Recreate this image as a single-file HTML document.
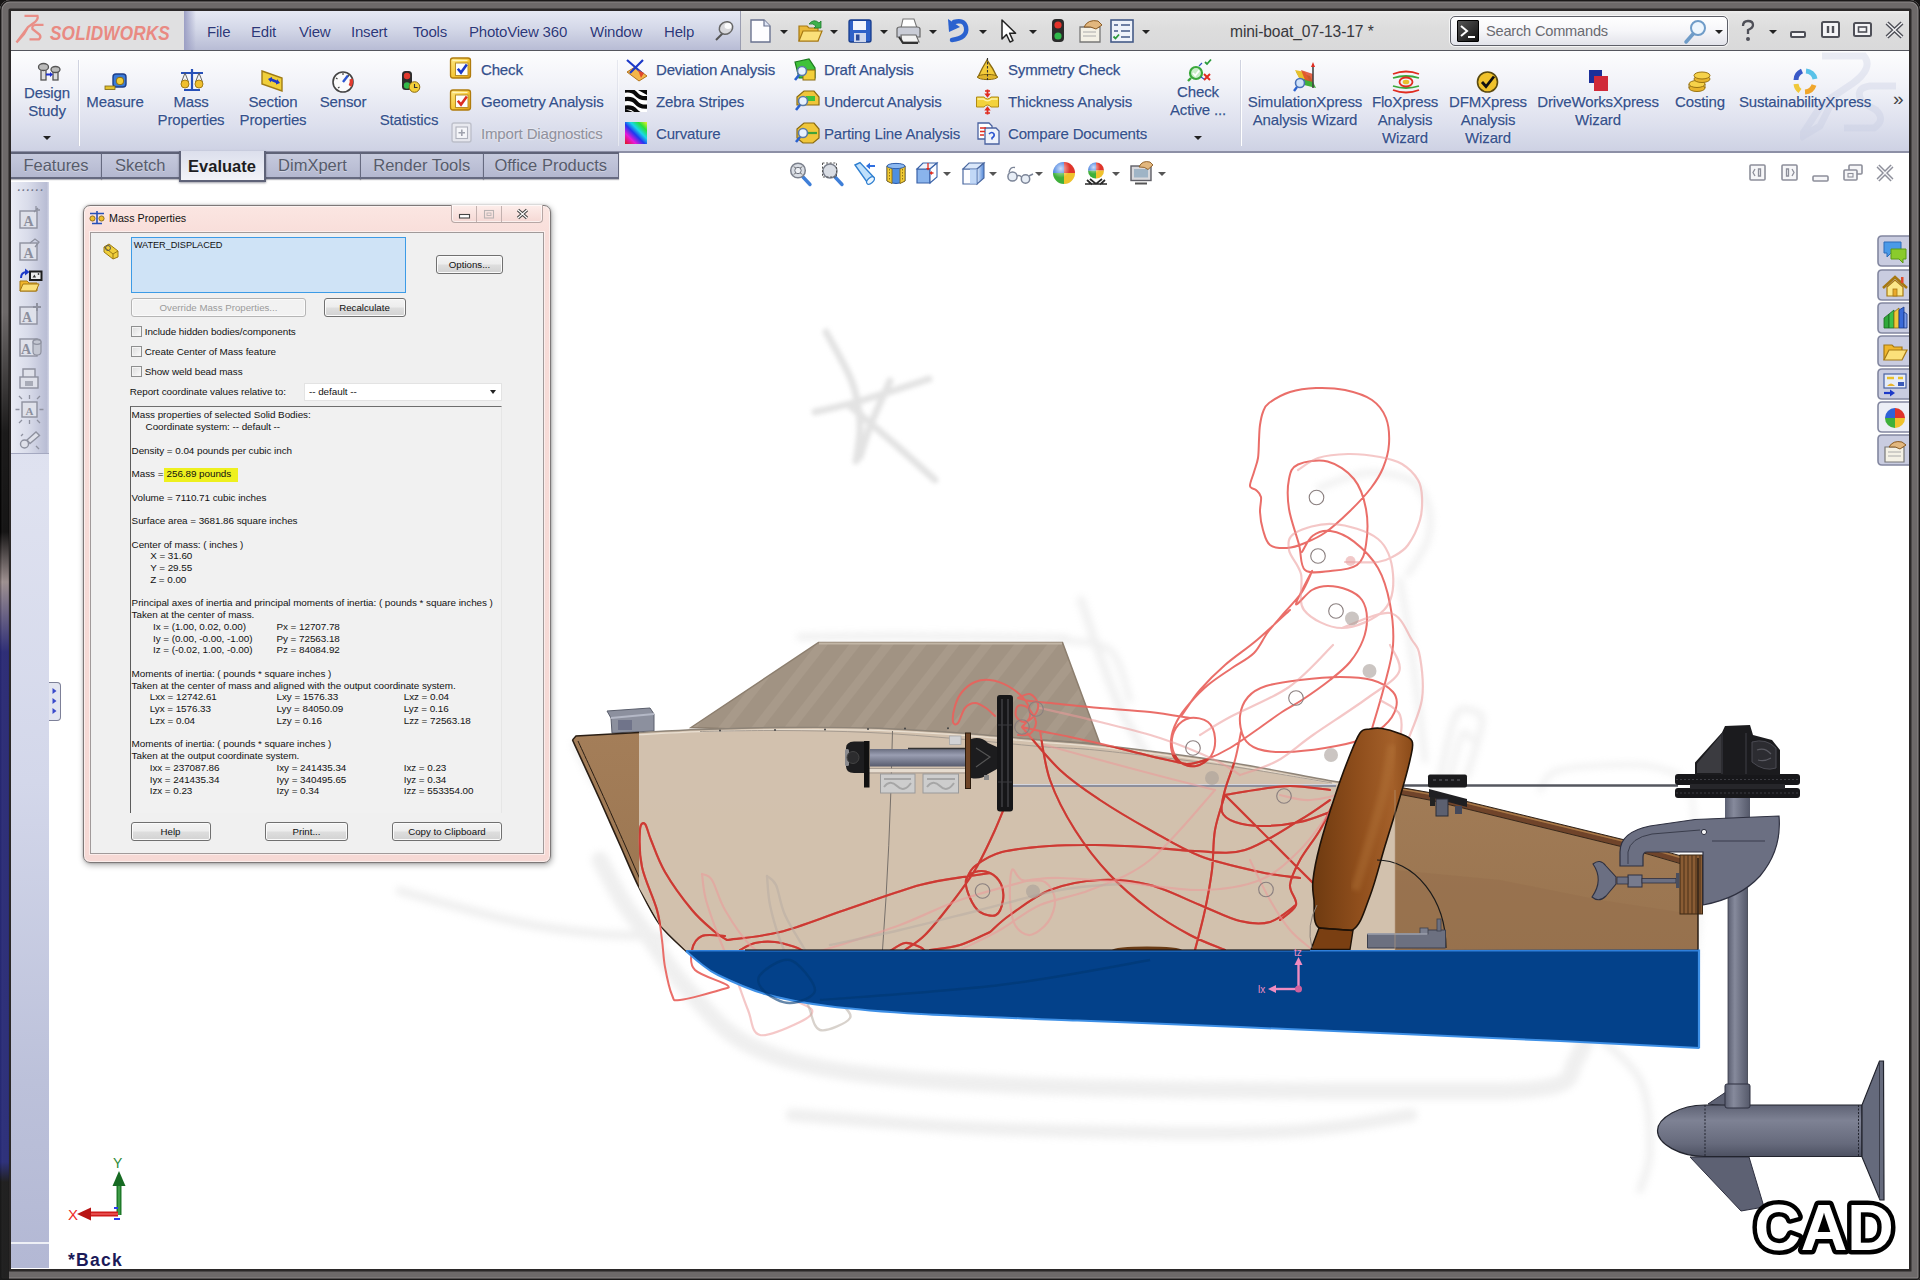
<!DOCTYPE html>
<html lang="en">
<head>
<meta charset="utf-8">
<title>SolidWorks - mini-boat_07-13-17</title>
<style>
*{box-sizing:border-box;margin:0;padding:0}
html,body{width:1920px;height:1280px;overflow:hidden;background:#171515;font-family:"Liberation Sans",sans-serif}
#app{position:absolute;left:0;top:0;width:1920px;height:1280px;overflow:hidden;background:#171515}
.abs{position:absolute}
/* window frame */
#frame{left:0;top:0;width:1920px;height:1280px;border-radius:10px 10px 3px 3px;box-shadow:inset 0 0 0 1.500px #1b1919,inset 0 0 0 2.500px #8c8888,inset 0 0 0 8.500px #6d6969,inset 0 0 0 11px #2b2828;pointer-events:none}
#frameB2{left:9px;top:1268.500px;width:1902px;height:4.500px;background:#2b2828}
#frameLtint{left:0;top:12px;width:9px;height:1280px;background:linear-gradient(to bottom,rgba(0,0,0,0) 0,rgba(0,0,0,0) 300px,rgba(0,0,0,.75) 420px,rgba(0,0,0,.8) 520px,rgba(190,170,170,.6) 570px,rgba(40,40,120,.9) 640px,rgba(40,44,125,.9) 1150px,rgba(25,25,25,.9) 1170px,rgba(25,25,25,.9) 1280px)}
#content{left:0;top:0;width:1920px;height:1280px;background:#fff;overflow:hidden;border-radius:10px}
.fr{z-index:50}
/* title bar */
#titlebar{left:0;top:11px;width:1920px;height:39px;background:linear-gradient(to bottom,#eeeeee 0,#e4e4e4 8%,#dddddd 45%,#d9d9da 100%)}
#titleline{left:0;top:49.5px;width:1920px;height:2px;background:#55565e}
#logo{left:11px;top:11px;width:173px;height:39px;background:#e0e0e1}
#menubar{left:184px;top:11px;width:557px;height:39px;background:linear-gradient(to bottom,#e6e9f4 0,#d4d8e8 45%,#b8bcd5 100%);border-right:1px solid #9a9db0}
#menubar .edge{left:0;top:0;width:12px;height:39px;background:linear-gradient(to right,#9c9fc4,rgba(180,184,212,0))}
.menu{position:absolute;top:22.500px;font-size:15px;color:#2c3778;white-space:nowrap;text-shadow:0 0 1px rgba(255,255,255,.6);letter-spacing:-.2px}
/* ribbon */
#ribbon{left:0;top:51px;width:1920px;height:101px;background:linear-gradient(to bottom,#fdfdfe 0,#f1f2f8 35%,#dcdfed 75%,#cdd1e3 100%)}
#ribbonline{left:0;top:151px;width:1920px;height:1.5px;background:#8d90a6}
.rb{position:absolute;font-size:15px;line-height:18px;color:#34508c;-webkit-text-stroke:.25px #34508c;text-align:center;white-space:nowrap;text-shadow:0 0 2px #fff,0 0 1px #fff;letter-spacing:-.15px}
.rl{position:absolute;font-size:15px;line-height:18px;color:#34508c;-webkit-text-stroke:.25px #34508c;white-space:nowrap;text-shadow:0 0 2px #fff,0 0 1px #fff;letter-spacing:-.15px}
.rl.dis{color:#8f919e;-webkit-text-stroke:.2px #8f919e}
.ico{position:absolute}
.sep{position:absolute;top:60px;width:1px;height:86px;background:#d0d3e0;box-shadow:1px 0 0 #fff}
.dd{position:absolute;width:0;height:0;border-left:4px solid transparent;border-right:4px solid transparent;border-top:4px solid #222}
/* tabs */
.tab{position:absolute;top:152px;height:27px;background:linear-gradient(to bottom,#c6cadd,#b4b8d0);border:2px solid #666a80;border-top:2px solid #5f6378;border-left-width:1px;border-right-width:1px;box-shadow:0 1px 1px rgba(60,60,80,.35);font-size:16.5px;line-height:23px;color:#565b6b;text-align:center;white-space:nowrap;text-shadow:0 1px 0 rgba(255,255,255,.35)}
.tab.act{background:linear-gradient(to bottom,#dcdfec,#f2f3f8);height:31px;border:2px solid #5f6378;border-top:none;color:#1d1d22;font-weight:bold;top:151px;padding-top:3.500px;box-shadow:0 1px 2px rgba(60,60,80,.5)}
</style>
</head>
<body>
<div id="app">
<div id="content" class="abs">
<!-- ============ TITLE BAR ============ -->
<div id="titlebar" class="abs"></div>
<div id="logo" class="abs"></div>
<svg class="abs" style="left:14px;top:13px" width="160" height="34" viewBox="0 0 160 34">
  <g fill="none" stroke="#e98a82" stroke-width="2.3" stroke-linejoin="miter" stroke-linecap="butt" opacity=".95">
    <path d="M10.500 2.800H23.500Q24.800 6.500 19 10.500L14 14L2.500 29.500L10 21L13.500 15"/>
    <path d="M29.500 11.800H21.500Q17.500 12.500 18.500 16L25.500 21.500Q27.500 24.500 25 26.300H15.500"/>
  </g>
  <text x="36" y="27" font-family="Liberation Sans, sans-serif" font-size="19.5" font-weight="bold" font-style="italic" fill="#e98a82" letter-spacing=".2" textLength="120" lengthAdjust="spacingAndGlyphs">SOLIDWORKS</text>
</svg>
<div id="menubar" class="abs"><div class="edge abs"></div></div>
<div class="menu" style="left:207px">File</div>
<div class="menu" style="left:251px">Edit</div>
<div class="menu" style="left:299px">View</div>
<div class="menu" style="left:351px">Insert</div>
<div class="menu" style="left:413px">Tools</div>
<div class="menu" style="left:469px">PhotoView 360</div>
<div class="menu" style="left:590px">Window</div>
<div class="menu" style="left:664px">Help</div>
<!-- pin -->
<svg class="abs" style="left:713px;top:19px" width="24" height="24" viewBox="0 0 24 24"><line x1="3" y1="21" x2="10" y2="14" stroke="#555" stroke-width="2"/><ellipse cx="13" cy="9" rx="7" ry="6" fill="#d8d8dc" stroke="#666" stroke-width="1.5" transform="rotate(-35 13 9)"/><ellipse cx="15" cy="7" rx="3.5" ry="3" fill="#fff" opacity=".9"/></svg>
<!-- quick access icons -->
<svg class="abs" style="left:745px;top:14px" width="420" height="34" viewBox="745 14 420 34">
  <!-- new -->
  <path d="M751 20h13l6 6v16h-19z" fill="#fdfdff" stroke="#6a7390" stroke-width="1.4"/><path d="M764 20v6h6" fill="#dfe6f5" stroke="#6a7390" stroke-width="1.2"/>
  <!-- open -->
  <path d="M799 41v-15h8l2 2h9v13z" fill="#e9b93a" stroke="#a67812" stroke-width="1.2"/><path d="M799 41l4-10h19l-4 10z" fill="#fbe07a" stroke="#a67812" stroke-width="1.2"/><path d="M809 24q5-6 10-1l2-2v7h-7l2-2q-3-3-7-2z" fill="#3db24b" stroke="#1c7a2a" stroke-width=".8"/>
  <!-- save -->
  <rect x="849" y="20" width="22" height="22" rx="2" fill="#2f62c8" stroke="#173c8c" stroke-width="1.3"/><rect x="853" y="21" width="13" height="9" fill="#f3f6fd"/><rect x="854" y="33" width="12" height="9" fill="#cfd8ee"/><rect x="856" y="34.5" width="3.5" height="6" fill="#2a4a98"/>
  <!-- print -->
  <path d="M903 19h11l3 9h-16z" fill="#fff" stroke="#777" stroke-width="1.1"/><path d="M897 29q0-2 3-2h17q3 0 3 2v8h-23z" fill="#c9ccd6" stroke="#666" stroke-width="1.2"/><path d="M901 35h15l3 7h-17z" fill="#f2f2f2" stroke="#666" stroke-width="1.1"/><path d="M899 37l4 6h15" fill="none" stroke="#333" stroke-width="2"/>
  <!-- undo -->
  <path d="M952 40q16-2 14-13q-2-8-12-5" fill="none" stroke="#2b62cf" stroke-width="4.5" stroke-linecap="round"/><path d="M948 19l1 13l11-5z" fill="#2b62cf"/>
  <!-- cursor -->
  <path d="M1002 20v19l4.5-4.5l3.5 7.500l3-1.400l-3.400-7.300h6z" fill="#fff" stroke="#222" stroke-width="1.5" stroke-linejoin="round"/>
  <!-- traffic light -->
  <rect x="1052" y="19" width="12" height="23" rx="4" fill="#2b2b2b"/><circle cx="1058" cy="25" r="3.600" fill="#e5332a"/><circle cx="1058" cy="36" r="3.600" fill="#2fb84a"/>
  <!-- options -->
  <path d="M1080 27h20v15h-20z" fill="#f4f1e6" stroke="#777" stroke-width="1.3"/><path d="M1083 32h13M1083 36h13" stroke="#aaa" stroke-width="1"/><path d="M1084 27q4-8 14-6l4 4l-6 4q-5-3-12-2z" fill="#e2b77e" stroke="#8a5a22" stroke-width="1"/>
  <!-- list -->
  <rect x="1111" y="20" width="22" height="22" fill="#eef2fa" stroke="#445a88" stroke-width="1.600"/><path d="M1114 25h4M1114 31h4M1121 25h9M1121 31h9M1121 37h9" stroke="#445a88" stroke-width="1.600"/><path d="M1113.500 36.500l2 2l3.500-4" stroke="#2a9a3a" stroke-width="1.800" fill="none"/>
</svg>
<div class="dd" style="left:780px;top:30px"></div><div class="dd" style="left:830px;top:30px"></div><div class="dd" style="left:880px;top:30px"></div><div class="dd" style="left:929px;top:30px"></div><div class="dd" style="left:979px;top:30px"></div><div class="dd" style="left:1029px;top:30px"></div><div class="dd" style="left:1142px;top:30px"></div>
<div class="abs" style="left:1230px;top:22.500px;font-size:15.600px;color:#38383c;white-space:nowrap;letter-spacing:-.1px">mini-boat_07-13-17 *</div>
<!-- search -->
<div class="abs" style="left:1450px;top:16px;width:278px;height:30px;border:1.5px solid #5d5f68;border-radius:5px;background:linear-gradient(to bottom,#fff 0,#f6f6f9 50%,#e2e3ea 100%);box-shadow:0 0 0 1px rgba(255,255,255,.7)"></div>
<div class="abs" style="left:1457px;top:20px;width:22px;height:22px;background:linear-gradient(135deg,#555,#111);border:1px solid #000;border-radius:1px"></div>
<svg class="abs" style="left:1457px;top:20px" width="22" height="22"><path d="M4 6l6 5l-6 5" stroke="#fff" stroke-width="2" fill="none"/><path d="M11 17h7" stroke="#fff" stroke-width="2"/></svg>
<div class="abs" style="left:1486px;top:23px;font-size:14.600px;color:#6a6a70;white-space:nowrap;letter-spacing:-.2px">Search Commands</div>
<svg class="abs" style="left:1682px;top:18px" width="30" height="28"><circle cx="16" cy="10" r="7" fill="#eef6fd" stroke="#6f9cc8" stroke-width="2"/><path d="M11 16l-7 8" stroke="#6f9cc8" stroke-width="3.500" stroke-linecap="round"/></svg>
<div class="dd" style="left:1715px;top:30px"></div>
<!-- window buttons -->
<svg class="abs" style="left:1736px;top:14px" width="172" height="34" viewBox="1736 14 172 34" fill="none" stroke="#4f5058" stroke-width="2">
  <path d="M1743 26q0-5 5-5q5 0 5 4q0 3-5 5v4" stroke-width="2.300"/><circle cx="1748" cy="39" r="1" fill="#4f5058"/>
  <rect x="1791" y="32" width="14" height="5" rx="1" fill="#f4f4f6"/>
  <rect x="1822" y="22" width="17" height="15" rx="1.500" fill="#f4f4f6"/><path d="M1828 26v7M1833 26v7" stroke-width="2.400"/>
  <rect x="1854" y="23" width="17" height="13" rx="1.500" fill="#f4f4f6"/><rect x="1858.500" y="27" width="8" height="5" stroke-width="1.600"/>
  <path d="M1887 23l15 14M1902 23l-15 14" stroke-width="4.200" stroke="#4f5058"/><path d="M1887 23l15 14M1902 23l-15 14" stroke-width="1.400" stroke="#f4f4f6"/>
</svg>
<div class="dd" style="left:1769px;top:30px"></div>
<div id="titleline" class="abs"></div>

<!-- ============ RIBBON ============ -->
<div id="ribbon" class="abs"></div>
<!-- DS watermark -->
<svg class="abs" style="left:1800px;top:52px" width="100" height="98" viewBox="0 0 100 98" opacity=".32"><g fill="none" stroke="#c3c9e0" stroke-width="7"><path d="M22 4h42q10 12-12 28l-30 20l-22 34l20-12l14-28"/><path d="M96 34h-26q-16 2-8 16l14 8q10 10-2 18h-30"/></g></svg>
<div id="ribbonline" class="abs"></div>
<div class="sep" style="left:78px"></div>
<div class="sep" style="left:617px;opacity:.45"></div>
<div class="sep" style="left:1240px"></div>

<div class="rb" style="left:7px;top:84px;width:80px">Design<br>Study</div><div class="dd" style="left:43px;top:136px"></div>
<div class="rb" style="left:75px;top:93px;width:80px">Measure</div>
<div class="rb" style="left:146px;top:93px;width:90px">Mass<br>Properties</div>
<div class="rb" style="left:228px;top:93px;width:90px">Section<br>Properties</div>
<div class="rb" style="left:303px;top:93px;width:80px">Sensor</div>
<div class="rb" style="left:369px;top:111px;width:80px">Statistics</div>

<div class="rl" style="left:481px;top:61px">Check</div>
<div class="rl" style="left:481px;top:93px">Geometry Analysis</div>
<div class="rl dis" style="left:481px;top:125px">Import Diagnostics</div>
<div class="rl" style="left:656px;top:61px">Deviation Analysis</div>
<div class="rl" style="left:656px;top:93px">Zebra Stripes</div>
<div class="rl" style="left:656px;top:125px">Curvature</div>
<div class="rl" style="left:824px;top:61px">Draft Analysis</div>
<div class="rl" style="left:824px;top:93px">Undercut Analysis</div>
<div class="rl" style="left:824px;top:125px">Parting Line Analysis</div>
<div class="rl" style="left:1008px;top:61px">Symmetry Check</div>
<div class="rl" style="left:1008px;top:93px">Thickness Analysis</div>
<div class="rl" style="left:1008px;top:125px">Compare Documents</div>
<div class="rb" style="left:1158px;top:83px;width:80px">Check<br>Active ...</div><div class="dd" style="left:1194px;top:136px"></div>
<div class="rb" style="left:1235px;top:93px;width:140px">SimulationXpress<br>Analysis Wizard</div>
<div class="rb" style="left:1355px;top:93px;width:100px">FloXpress<br>Analysis<br>Wizard</div>
<div class="rb" style="left:1438px;top:93px;width:100px">DFMXpress<br>Analysis<br>Wizard</div>
<div class="rb" style="left:1528px;top:93px;width:140px">DriveWorksXpress<br>Wizard</div>
<div class="rb" style="left:1660px;top:93px;width:80px">Costing</div>
<div class="rb" style="left:1735px;top:93px;width:140px">SustainabilityXpress</div>
<div class="abs" style="left:1893px;top:88px;font-size:19px;color:#444">»</div>

<!-- ribbon icons -->
<svg class="abs" style="left:0;top:51px" width="1920" height="101" viewBox="0 51 1920 101">
  <!-- design study -->
  <g stroke="#555" stroke-width="1.300"><rect x="41" y="69" width="5" height="11" fill="#ddd"/><ellipse cx="43.500" cy="67" rx="5" ry="3.500" fill="#bbb"/><rect x="53" y="71" width="5" height="9" fill="#ddd"/><ellipse cx="55.500" cy="69.500" rx="4.500" ry="3" fill="#bbb"/></g><path d="M46 74.500h5" stroke="#1c2fd0" stroke-width="2"/><path d="M50 72l3 2.500l-3 2.500z" fill="#1c2fd0"/>
  <!-- measure -->
  <rect x="113" y="74" width="13" height="13" rx="3" fill="#3a7bd8" stroke="#1c3f8a" stroke-width="1.400"/><circle cx="120" cy="81" r="3.800" fill="#f2cf38" stroke="#8a6a10" stroke-width="1"/><rect x="105" y="86" width="10" height="3.500" fill="#e3c22e" stroke="#7a6412" stroke-width=".8"/>
  <!-- mass props -->
  <g stroke="#2750b8" stroke-width="2.200" fill="none"><path d="M181 73h22M192 69v20M184 90h16"/></g><path d="M185 73l-3.500 9M185 73l3.500 9M199 73l-3.500 9M199 73l3.500 9" stroke="#555" stroke-width=".9"/><circle cx="185" cy="84" r="4" fill="#f0bf2e" stroke="#9a7410" stroke-width=".9"/><circle cx="199" cy="84" r="4" fill="#f0bf2e" stroke="#9a7410" stroke-width=".9"/>
  <!-- section props -->
  <path d="M262 71l20 7v13l-20-7z" fill="#f0cf3a" stroke="#a07c14" stroke-width="1.400"/><path d="M268 79l4-2v1.500l5 2v-1.500l3 4l-4 1.500v-1.500l-5-2v1.500z" fill="#1c39c8"/>
  <!-- sensor -->
  <circle cx="343" cy="82" r="10" fill="#fbfbfb" stroke="#444" stroke-width="1.600"/><path d="M343 82l5-6.500" stroke="#2b55d0" stroke-width="2.400"/><path d="M350 86a8 8 0 0 0 1-7" stroke="#e23a2e" stroke-width="3.200" fill="none"/><path d="M336 78l1.500 1M338 88l1.500-1M343 73v2M349 75l-1 1.500" stroke="#444" stroke-width="1.200"/>
  <!-- statistics -->
  <rect x="402" y="71" width="10" height="19" rx="3.500" fill="#2d2d2d"/><circle cx="407" cy="76" r="3.200" fill="#e23a2e"/><circle cx="407" cy="85.500" r="3.200" fill="#32b84a"/><circle cx="414.500" cy="87" r="5.300" fill="#f3cf3a" stroke="#8a6a10" stroke-width="1"/><path d="M414.500 84v3.500h3" stroke="#333" stroke-width="1.100" fill="none"/>
  <!-- check / geometry / import -->
  <g><rect x="450.500" y="58" width="20" height="20" rx="2.500" fill="url(#ckg)" stroke="#b07c0e" stroke-width="1.300"/><path d="M452.500 60.5 h15" stroke="#fff3b8" stroke-width="1.200"/><rect x="455.500" y="63" width="12.500" height="12.500" fill="#fdfdfd" stroke="#b8902a" stroke-width="1"/><path d="M457.800 68.8l3.200 3.800l5.800-8" stroke="#1c39c8" stroke-width="2.500" fill="none"/></g>
  <g><rect x="450.500" y="90" width="20" height="20" rx="2.500" fill="url(#ckg)" stroke="#b07c0e" stroke-width="1.300"/><path d="M452.500 92.5 h15" stroke="#fff3b8" stroke-width="1.200"/><rect x="455.500" y="95" width="12.500" height="12.500" fill="#fdfdfd" stroke="#b8902a" stroke-width="1"/><path d="M457.800 100.8l3.200 3.800l5.800-8" stroke="#dc2c20" stroke-width="2.500" fill="none"/></g>
  <g opacity=".75"><rect x="452" y="123" width="19" height="19" rx="2" fill="#ececf0" stroke="#b4b6c0" stroke-width="1.400"/><rect x="456" y="127" width="11.500" height="11.500" fill="#fff" stroke="#a2a4ae" stroke-width="1.100"/><path d="M458.500 132.800h6.500M461.800 129.500v6.500" stroke="#8e909a" stroke-width="1.600"/></g>
  <!-- deviation -->
  <path d="M627 72l8-5l12 9l-8 5z" fill="#f3b64a" stroke="#b4741c" stroke-width="1"/><path d="M627 60l16 14M643 60l-13 13" stroke="#1c39c8" stroke-width="2.200"/><path d="M638 70l6 3l-3 5z" fill="#e24a2a"/>
  <!-- zebra -->
  <clipPath id="zc"><rect x="625" y="90" width="22" height="22"/></clipPath><rect x="625" y="90" width="22" height="22" fill="#fff"/><g fill="none" stroke="#0a0a0a" stroke-width="4.200" clip-path="url(#zc)"><path d="M623 91q9-2 13 3t12 4"/><path d="M623 99.500q9-2 13 3t12 4"/><path d="M623 108q9-2 13 3t12 4"/></g><path d="M647 90v5l-9-5zM625 112v-3l8 3z" fill="#0a0a0a"/>
  <!-- curvature -->
  <defs><linearGradient id="ckg" x1="0" y1="0" x2="1" y2="1"><stop offset="0" stop-color="#fde98a"/><stop offset=".5" stop-color="#f6c93a"/><stop offset="1" stop-color="#e09a10"/></linearGradient><linearGradient id="cv1" x1="0" y1="1" x2="1" y2="0"><stop offset="0" stop-color="#e01818"/><stop offset=".25" stop-color="#e818d8"/><stop offset=".45" stop-color="#2038f0"/><stop offset=".62" stop-color="#18d8e8"/><stop offset=".8" stop-color="#28e038"/><stop offset="1" stop-color="#f0f028"/></linearGradient></defs>
  <rect x="625" y="122" width="22" height="22" fill="url(#cv1)"/>
  <!-- draft -->
  <path d="M795 62l14-3l6 9v10h-16z" fill="#3fc23a" stroke="#1a7a1e" stroke-width="1.200"/><rect x="803" y="70" width="12" height="10" fill="#f3cf3a" stroke="#8a6a10" stroke-width="1"/><circle cx="802" cy="71" r="4.500" fill="#e8f2ff" stroke="#5a7aa8" stroke-width="1.600"/><path d="M799 75l-4 5" stroke="#2b62cf" stroke-width="2.600"/>
  <!-- undercut -->
  <path d="M797 97l7-6h10l5 6v8h-22z" fill="#f0c63a" stroke="#8a6a10" stroke-width="1.200"/><path d="M806 96h9v5h-9z" fill="#3fc23a"/><circle cx="803" cy="101" r="4.500" fill="#e8f2ff" stroke="#5a7aa8" stroke-width="1.600"/><path d="M800 105l-4 5" stroke="#2b62cf" stroke-width="2.600"/>
  <!-- parting -->
  <path d="M797 129l7-6h10l5 6v9l-6 5h-10l-6-5z" fill="#f0c63a" stroke="#8a6a10" stroke-width="1.200"/><path d="M801 133h16" stroke="#3fa23a" stroke-width="2.200"/><circle cx="803" cy="133" r="4.500" fill="#e8f2ff" stroke="#5a7aa8" stroke-width="1.600"/><path d="M800 137l-4 5" stroke="#2b62cf" stroke-width="2.600"/>
  <!-- symmetry -->
  <path d="M987 60q-5 8-9 17h19q-4-9-10-17z" fill="#f3cb3a" stroke="#8a6a10" stroke-width="1.300"/><ellipse cx="987.500" cy="77" rx="10" ry="2.600" fill="#e0b42c" stroke="#8a6a10" stroke-width="1"/><path d="M987.500 58v22" stroke="#333" stroke-width="1.100" stroke-dasharray="2.500 1.500"/>
  <!-- thickness -->
  <path d="M976.500 97h7.500q3.500 4 7 0h7.500v10h-7.500q-3.500-4-7 0h-7.500z" fill="#f3d23c" stroke="#b08a14" stroke-width="1"/><path d="M977.500 99h6q4 3.500 8 0h6" fill="none" stroke="#fdf2a8" stroke-width="1.500"/><path d="M987.500 89.500v5M987.500 114.500v-5" stroke="#e02c20" stroke-width="1.800"/><path d="M984.300 93.500h6.400l-3.200 4.200zM984.300 110.500h6.400l-3.200-4.200z" fill="#e02c20"/><path d="M985 91h5M985 113h5" stroke="#e02c20" stroke-width="1.400"/>
  <!-- compare -->
  <path d="M978 123h11l3 3v13h-14z" fill="#fff" stroke="#4a62a0" stroke-width="1.300"/><path d="M985 128h11l3 3v13h-14z" fill="#eef2fb" stroke="#4a62a0" stroke-width="1.300"/><path d="M980 128h6M980 131.500h5M980 135h4" stroke="#e02c20" stroke-width="1.600"/><path d="M989 134q3-3 5 0q1 2-2 4v1.500" stroke="#2b55d0" stroke-width="1.600" fill="none"/>
  <!-- check active -->
  <circle cx="1196" cy="73" r="6" fill="#c9edc9" stroke="#3aa83a" stroke-width="2.200"/><path d="M1193 73l2.200 2.500l4-5" stroke="#fff" stroke-width="1.800" fill="none"/><path d="M1191 78l-3 3" stroke="#3aa83a" stroke-width="2.400"/><path d="M1205 62l2 2l4-4.500" stroke="#2a9a3a" stroke-width="1.800" fill="none"/><path d="M1204 74l6 6M1210 74l-6 6" stroke="#e02c20" stroke-width="2"/><path d="M1199 66l3-3M1201 77l3 2" stroke="#3050c0" stroke-width="1.200"/>
  <!-- simulationxpress -->
  <path d="M1296 72l14 4l6 12l-12-3z" fill="#3fb03a"/><path d="M1295 70l10 2l4 8l-10-2z" fill="#e8c02c"/><path d="M1301 70l12 4v8l-8-2z" fill="#e04a2a" opacity=".85"/><path d="M1313 66v22" stroke="#444" stroke-width="1.600"/><path d="M1313 62l-2 5h4z" fill="#e02c20"/><circle cx="1300" cy="83" r="4.500" fill="#cfe2fa" stroke="#4a72b8" stroke-width="1.600"/><path d="M1297 87l-3 4" stroke="#2b62cf" stroke-width="2.400"/>
  <!-- floxpress -->
  <g fill="none" stroke-width="1.800"><path d="M1393 74q13-5 26 0M1393 90q13 5 26 0" stroke="#e02c20"/><path d="M1393 78q13-4 26 0M1393 86q13 4 26 0" stroke="#3aa83a"/><ellipse cx="1406" cy="82" rx="6.500" ry="4.500" stroke="#e02c20"/></g><ellipse cx="1406" cy="82" rx="3.300" ry="2.300" fill="#e8c02c"/>
  <!-- dfmxpress -->
  <circle cx="1487.500" cy="82" r="10" fill="#f0c22c" stroke="#5a4a10" stroke-width="1.600"/><path d="M1482 82l4 4.500l8-10" stroke="#111" stroke-width="2.800" fill="none"/>
  <!-- driveworks -->
  <rect x="1589" y="70" width="13" height="13" fill="#1c2f9a"/><rect x="1594" y="76" width="14" height="15" fill="#d02a3a"/>
  <!-- costing -->
  <g stroke="#9a7410" stroke-width="1"><ellipse cx="1697" cy="88" rx="8" ry="3.500" fill="#e8b42c"/><path d="M1689 84v4M1705 84v4" /><ellipse cx="1697" cy="84" rx="8" ry="3.500" fill="#f6d24a"/><ellipse cx="1702" cy="79" rx="8" ry="3.500" fill="#e8b42c"/><ellipse cx="1702" cy="75.500" rx="8" ry="3.500" fill="#f6d24a"/></g>
  <!-- sustainability -->
  <g fill="none" stroke-width="5"><path d="M1796 80a10 10 0 0 1 6-9" stroke="#3a5ac8"/><path d="M1806 71a10 10 0 0 1 9 8" stroke="#5ac2e8"/><path d="M1814 85a10 10 0 0 1-9 7" stroke="#f0a62c"/><path d="M1800 91a10 10 0 0 1-4-7" stroke="#f0c83a"/></g>
</svg>

<!-- ============ TABS ============ -->
<div class="tab" style="left:10px;width:92px">Features</div>
<div class="tab" style="left:100.500px;width:79.500px">Sketch</div>
<div class="tab" style="left:264px;width:97px">DimXpert</div>
<div class="tab" style="left:359.500px;width:124.500px">Render Tools</div>
<div class="tab" style="left:482.500px;width:136.500px">Office Products</div>
<div class="tab act" style="left:178.500px;width:87px">Evaluate</div>
<!-- ============ GRAPHICS SCENE ============ -->
<svg class="abs" style="left:0;top:0" width="1920" height="1280" viewBox="0 0 1920 1280">
<defs>
<filter id="blur3" x="-10%" y="-10%" width="120%" height="120%"><feGaussianBlur stdDeviation="3.600"/></filter>
<filter id="blur2" x="-10%" y="-10%" width="120%" height="120%"><feGaussianBlur stdDeviation="2.100"/></filter>
<filter id="blur1" x="-10%" y="-10%" width="120%" height="120%"><feGaussianBlur stdDeviation=".6"/></filter>
<linearGradient id="gSeat" x1="0" y1="0" x2="1" y2="0"><stop offset="0" stop-color="#6e3a10"/><stop offset=".45" stop-color="#8f4e1c"/><stop offset=".8" stop-color="#a4602a"/><stop offset="1" stop-color="#8a4a18"/></linearGradient>
<linearGradient id="gShaft" x1="0" y1="0" x2="1" y2="0"><stop offset="0" stop-color="#5b5f71"/><stop offset=".35" stop-color="#868a9c"/><stop offset="1" stop-color="#55596a"/></linearGradient>
<linearGradient id="gBody" x1="0" y1="0" x2="0" y2="1"><stop offset="0" stop-color="#5e6274"/><stop offset=".3" stop-color="#7e8294"/><stop offset=".75" stop-color="#666a7c"/><stop offset="1" stop-color="#4d5162"/></linearGradient>
<linearGradient id="gTube" x1="0" y1="0" x2="0" y2="1"><stop offset="0" stop-color="#6a6e80"/><stop offset=".35" stop-color="#9a9eb2"/><stop offset="1" stop-color="#585c6e"/></linearGradient>
<linearGradient id="gBrown" x1="0" y1="0" x2="0" y2="1"><stop offset="0" stop-color="#a47e59"/><stop offset="1" stop-color="#99744f"/></linearGradient>
<pattern id="pStripe" width="26" height="26" patternUnits="userSpaceOnUse" patternTransform="rotate(38)"><rect width="26" height="26" fill="#a19383"/><rect width="9" height="26" fill="#a89a8a"/></pattern>
<clipPath id="clipHull"><path d="M572 737L1700 737L1700 1050L685 1050L600 830Z"/></clipPath>
</defs>
<g fill="none" stroke="#cfcfcf" stroke-linecap="round" stroke-linejoin="round" filter="url(#blur3)" opacity=".32">
<path d="M400 891C419.5 896.2 483.7 914.8 517 922C550.3 929.2 574.7 931.7 600 934C625.3 936.3 657.5 935.7 669 936" stroke-width="9"/>
<path d="M600 860C603.7 866.7 614 887.3 622 900C630 912.7 636.8 920.8 648 936C659.2 951.2 671.8 972.7 689 991C706.2 1009.3 722.3 1032.2 751 1046C779.7 1059.8 808.3 1067.2 861 1074C913.7 1080.8 975.3 1084.2 1067 1087C1158.7 1089.8 1330.7 1091 1411 1091C1491.3 1091 1521.5 1092.2 1549 1087C1576.5 1081.8 1568.8 1070.8 1576 1060C1583.2 1049.2 1589.3 1028.3 1592 1022" stroke-width="17"/>
<path d="M792 1115C826.5 1117.3 918.7 1126.2 999 1129C1079.3 1131.8 1205.3 1134.3 1274 1132C1342.7 1129.7 1388.2 1117.8 1411 1115" stroke-width="13"/>
<path d="M800 637C816.7 636.8 855.7 635.8 900 636C944.3 636.2 1038.3 637.7 1066 638" stroke-width="7"/>
<path d="M620 800C616.7 798.3 607.5 799.2 600 790C592.5 780.8 579.2 752.5 575 745" stroke-width="7"/>
<path d="M1590 1030C1598.3 1038.3 1630 1060 1640 1080C1650 1100 1650 1131.7 1650 1150C1650 1168.3 1641.7 1183.3 1640 1190" stroke-width="7"/>
<path d="M1081 600C1084.2 609.3 1093.2 637.3 1100 656C1106.8 674.7 1113.7 694.7 1122 712C1130.3 729.3 1145.3 752 1150 760" stroke-width="8"/>
<path d="M1060 640C1068.3 641.7 1098.3 640 1110 650C1121.7 660 1126.7 691.7 1130 700" stroke-width="6"/>
<path d="M1319 488C1326.8 485.5 1350.8 474.3 1366 473C1381.2 471.7 1399.7 474.7 1410 480C1420.3 485.3 1425 495.2 1428 505C1431 514.8 1431.3 527.5 1428 539C1424.7 550.5 1411.3 568.2 1408 574" stroke-width="6"/>
<path d="M1400 580C1401.7 590 1407 620 1410 640C1413 660 1415.5 680 1418 700C1420.5 720 1423.8 750 1425 760" stroke-width="6"/>
<path d="M1437 791C1440 778.7 1449 730.3 1455 717C1461 703.7 1468.5 710 1473 711C1477.5 712 1483 712.2 1482 723C1481 733.8 1469.5 767.2 1467 776" stroke-width="6"/>
<path d="M1447 790C1449.5 780.8 1457.8 743.3 1462 735C1466.2 726.7 1470.3 739.2 1472 740" stroke-width="5"/>
<path d="M1540 790C1543.3 786.7 1543.3 774.2 1560 770C1576.7 765.8 1620 764.2 1640 765C1660 765.8 1673.3 773.3 1680 775" stroke-width="5"/>
<path d="M1690 780C1691.7 800 1700 863.3 1700 900C1700 936.7 1691.7 983.3 1690 1000" stroke-width="4"/>
</g>
<g fill="none" stroke="#d2d2d2" stroke-linecap="round" stroke-width="7" filter="url(#blur2)" opacity=".62">
<path d="M826 332C830.3 340.3 846.3 366.7 852 382C857.7 397.3 859.3 410.8 860 424C860.7 437.2 856.7 454.8 856 461"/>
<path d="M815 412C822.5 410.2 841 406.5 860 401C879 395.5 917.5 382.7 929 379"/>
<path d="M890 381C886.8 388.2 876 411.3 871 424C866 436.7 861.8 451.5 860 457"/>
<path d="M849 405C857 411.8 882.7 433.5 897 446C911.3 458.5 928.7 474.3 935 480"/>
</g>
<path d="M691 727.5L818.5 642.5L1062.5 642.5L1100 744L1012 738Z" fill="url(#pStripe)" stroke="#8c7e6e" stroke-width="1.500"/>
<path d="M819 643.500L1062 643.500" stroke="#c2b6a6" stroke-width="2"/>
<path d="M607 711L650 708L654 714L654 731L612 733L611 718Z" fill="#8c909e" stroke="#5a5e6c" stroke-width="1"/>
<path d="M611 718L654 714" stroke="#b4b8c6" stroke-width="2"/><rect x="618" y="720" width="14" height="10" fill="#70748a"/>
<path d="M572.5 740L576 736L639 732.5L700 729.5L780 727.5L870 728L960 733L1040 740L1100 745L1225 761.5L1332 781L1400 787L1432 793L1625 840L1682 856.5L1698 860L1698 950L687 951.5L660 925L639 887.5L620 845L600 800Z" fill="url(#gBrown)"/>
<path d="M1395 870L1500 880L1600 900L1698 915L1698 950L1395 950Z" fill="#96704c" opacity=".55"/>
<path d="M1398 790.5L1432 797L1625 844L1684 861" fill="none" stroke="#70442a" stroke-width="6.500"/>
<path d="M1398 788.5L1432 794.5L1625 841.5L1684 858.5" fill="none" stroke="#a97846" stroke-width="1.600"/>
<path d="M1398 787L1432 793L1625 840L1690 858.5" fill="none" stroke="#2e2016" stroke-width="1"/>
<path d="M1398 794L1432 800.5L1625 847.5L1680 863.5" fill="none" stroke="#2e2016" stroke-width=".9"/>
<path d="M572.5 740C577.1 750 592.1 782.5 600 800C607.9 817.5 613.5 830.4 620 845C626.5 859.6 632.3 874.2 639 887.5C645.7 900.8 652 914.2 660 925C668 935.8 682.5 947.5 687 952" fill="none" stroke="#2a1e14" stroke-width="1.600"/>
<path d="M578 741C582.5 750.8 597.2 782.7 605 800C612.8 817.3 618.5 830.4 625 845C631.5 859.6 637.5 874.5 644 887.5C650.5 900.5 656.3 912.6 664 923C671.7 933.4 685.7 945.5 690 950" fill="none" stroke="#2a1e14" stroke-width="1"/>
<path d="M572.500 740L576 736L639 732.500" fill="none" stroke="#2a1e14" stroke-width="1.400"/>
<rect x="1680" y="855" width="22.500" height="59" fill="#8a5c34" stroke="#3a2612" stroke-width="1"/>
<path d="M1684 855v59M1688 855v59M1692 855v59M1696 855v59M1700 855v59" stroke="#4a3018" stroke-width="1"/>
<path d="M1698 858V950" stroke="#2a1e14" stroke-width="1.500"/>
<defs><clipPath id="clipPanel"><path d="M639 732.5L700 729.5L780 727.5L870 728L960 733L1040 740L1100 745L1225 761.5L1332 781L1395 790L1395 951L687 951.5L660 925L639 887.5Z"/></clipPath></defs>
<path d="M639 732.5L700 729.5L780 727.5L870 728L960 733L1040 740L1100 745L1225 761.5L1332 781L1395 790L1395 951L687 951.5L660 925L639 887.5Z" fill="#d4c3b1" opacity=".97"/>
<path d="M639 732.5C649.2 732 676.5 730.3 700 729.5C723.5 728.7 751.7 727.8 780 727.5C808.3 727.2 840 727.1 870 728C900 728.9 931.7 731 960 733C988.3 735 1016.7 738 1040 740C1063.3 742 1069.2 741.4 1100 745C1130.8 748.6 1186.3 755.5 1225 761.5C1263.7 767.5 1303.7 776.2 1332 781C1360.3 785.8 1384.5 788.5 1395 790" fill="none" stroke="#8e8478" stroke-width="1.300"/>
<path d="M639 734.7C649.2 734.2 676.5 732.5 700 731.7C723.5 730.9 751.7 730 780 729.7C808.3 729.5 840 729.3 870 730.2C900 731.1 931.7 733.2 960 735.2C988.3 737.2 1016.7 740.2 1040 742.2C1063.3 744.2 1069.2 743.6 1100 747.2C1130.8 750.8 1186.3 757.7 1225 763.7C1263.7 769.7 1303.7 778.5 1332 783.2C1360.3 788 1384.5 790.7 1395 792.2" fill="none" stroke="#efe6da" stroke-width="1.200" opacity=".8"/>
<path d="M700 731.5C713.3 731.3 751.7 730.3 780 730.5C808.3 730.7 840 731.1 870 732.5C900 733.9 931.7 736.7 960 739C988.3 741.3 1016.7 744.6 1040 746.5C1063.3 748.4 1069.2 747.3 1100 750.5C1130.8 753.7 1186.3 760.1 1225 765.5C1263.7 770.9 1314.2 780.1 1332 783" fill="none" stroke="#a0968c" stroke-width=".9"/>
<path d="M892.500 731Q890 850 882.500 950" fill="none" stroke="#77706a" stroke-width="1"/>
<circle cx="720" cy="730.5" r="1" fill="#444"/>
<circle cx="775" cy="730" r="1" fill="#444"/>
<circle cx="825" cy="729.5" r="1" fill="#444"/>
<circle cx="868" cy="729" r="1" fill="#444"/>
<circle cx="905" cy="728.6" r="1" fill="#444"/>
<circle cx="948" cy="728.2" r="1" fill="#444"/>
<path d="M1013 785.500H1336" stroke="#8d8f9c" stroke-width="3"/><path d="M1013 784.500H1336" stroke="#d4d6de" stroke-width="1"/>
<path d="M1400 785.500L1470 785.500L1678 785.500" stroke="#55575f" stroke-width="2.600"/>
<defs><path id="figp" d="M1269 403C1273.5 399.7 1282.2 394.5 1290 392C1297.8 389.5 1306.8 388.3 1316 388C1325.2 387.7 1335.7 388 1345 390C1354.3 392 1365.2 395.3 1372 400C1378.8 404.7 1383.2 410.7 1386 418C1388.8 425.3 1389.5 435.7 1389 444C1388.5 452.3 1386 460.7 1383 468C1380 475.3 1376.5 480.8 1371 488C1365.5 495.2 1357.5 503.7 1350 511C1342.5 518.3 1333.5 526.7 1326 532C1318.5 537.3 1311.5 540.3 1305 543C1298.5 545.7 1292.8 547.7 1287 548C1281.2 548.3 1274 548 1270 545C1266 542 1264.7 535.5 1263 530C1261.3 524.5 1260.3 517.5 1260 512C1259.7 506.5 1261.7 500.7 1261 497C1260.3 493.3 1257.8 491.8 1256 490C1254.2 488.2 1250.3 489 1250 486C1249.7 483 1252.7 476.7 1254 472C1255.3 467.3 1257.2 463.3 1258 458C1258.8 452.7 1258.7 445.5 1259 440C1259.3 434.5 1259.3 429.7 1260 425C1260.7 420.3 1261.5 415.7 1263 412C1264.5 408.3 1264.5 406.3 1269 403ZM1289 479C1290.5 471.6 1291.6 467.4 1298 464.5C1304.4 461.6 1318.3 459.1 1327.6 461.5C1336.9 463.9 1347.6 471.1 1354 479C1360.4 486.9 1364 498.1 1366 509C1368 519.9 1367.5 535.3 1366 544.6C1364.5 553.9 1362.9 560.6 1357 565C1351.1 569.4 1339.2 570.2 1330.5 571C1321.8 571.8 1310.2 574.4 1305 570C1299.8 565.6 1301.7 554.8 1299 544.6C1296.3 534.4 1290.7 519.9 1289 509C1287.3 498.1 1287.5 486.4 1289 479ZM1302 552C1303.8 549.3 1308 539.2 1312.7 535.7C1317.5 532.2 1323.6 530 1330.5 531C1337.4 532 1346.1 535.4 1354 541.6C1361.9 547.8 1372 557.6 1378 568C1384 578.4 1387.5 591.1 1390 604C1392.5 616.9 1394 631.7 1393 645.5C1392 659.3 1387.5 673.1 1384 687C1380.5 700.9 1374 721.7 1372 728.6M1312 571C1313 569 1306.5 585.2 1302 592C1297.5 598.8 1290.7 605.3 1285 612C1279.3 618.7 1273.2 625.2 1268 632C1262.8 638.8 1260 647 1254 653C1248 659 1239.7 662.7 1232 668C1224.3 673.3 1215 679.2 1208 685C1201 690.8 1195.2 697 1190 703C1184.8 709 1180.2 714.8 1177 721C1173.8 727.2 1171.5 734 1171 740C1170.5 746 1171.5 753 1174 757C1176.5 761 1180.8 763.5 1186 764C1191.2 764.5 1197.7 762.7 1205 760C1212.3 757.3 1221.2 753.2 1230 748C1238.8 742.8 1249.3 735 1258 729C1266.7 723 1274.7 716.8 1282 712C1289.3 707.2 1294 705.3 1302 700C1310 694.7 1322 686.3 1330 680C1338 673.7 1344.5 668.7 1350 662C1355.5 655.3 1360.2 647.3 1363 640C1365.8 632.7 1367.2 624.7 1367 618C1366.8 611.3 1365.2 604.7 1362 600C1358.8 595.3 1353.7 592.3 1348 590C1342.3 587.7 1334 586 1328 586C1322 586 1317.3 587 1312 590C1306.7 593 1296 607.2 1296 604C1296 600.8 1311 573 1312 571ZM1240 716C1240.7 709.2 1243.7 702 1248 697C1252.3 692 1257.3 688.8 1266 686C1274.7 683.2 1287.7 681.5 1300 680C1312.3 678.5 1328 677 1340 677C1352 677 1363.2 677.5 1372 680C1380.8 682.5 1389 687.3 1393 692C1397 696.7 1397.5 702.3 1396 708C1394.5 713.7 1390 720.7 1384 726C1378 731.3 1369.8 736.3 1360 740C1350.2 743.7 1337.5 746 1325 748C1312.5 750 1296.2 751.8 1285 752C1273.8 752.2 1264.8 751.3 1258 749C1251.2 746.7 1247 743.5 1244 738C1241 732.5 1239.3 722.8 1240 716ZM1172 746C1171.3 740.3 1173 732.7 1176 728C1179 723.3 1184.7 719 1190 718C1195.3 717 1203.8 718.7 1208 722C1212.2 725.3 1214.5 732.3 1215 738C1215.5 743.7 1214.2 751.3 1211 756C1207.8 760.7 1201.2 765 1196 766C1190.8 767 1184 765.3 1180 762C1176 758.7 1172.7 751.7 1172 746ZM1190 718C1183.3 717 1165 713.7 1150 712C1135 710.3 1115 709.3 1100 708C1085 706.7 1071.7 705.2 1060 704C1048.3 702.8 1037 702 1030 701C1023 700 1020 698.5 1018 698M1186 764C1180 762.7 1162.7 759 1150 756C1137.3 753 1123.3 749.2 1110 746C1096.7 742.8 1081.7 739.5 1070 737C1058.3 734.5 1048 732.7 1040 731C1032 729.3 1025 727.7 1022 727M1022 727C1023.3 725.2 1029.5 720.5 1030 716C1030.5 711.5 1028.7 705 1025 700C1021.3 695 1013.8 689.3 1008 686C1002.2 682.7 995.5 680.7 990 680C984.5 679.3 979.7 680 975 682C970.3 684 965.3 688 962 692C958.7 696 956.5 701 955 706C953.5 711 952.5 719.2 953 722C953.5 724.8 956 725.3 958 723C960 720.7 962.2 711.3 965 708C967.8 704.7 971.5 703 975 703C978.5 703 982.7 705.8 986 708C989.3 710.2 993.5 714.7 995 716M1018 698C1020 697.3 1026.7 693 1030 694C1033.3 695 1037.3 700.3 1038 704C1038.7 707.7 1036.3 713 1034 716C1031.7 719 1027 722 1024 722C1021 722 1017 718.7 1016 716C1015 713.3 1016 707.3 1018 706C1020 704.7 1025 705.3 1028 708C1031 710.7 1035.7 717.7 1036 722C1036.3 726.3 1033 731.8 1030 734C1027 736.2 1020 734.8 1018 735M1182 715C1185 710.8 1192.8 698.3 1200 690C1207.2 681.7 1215.5 673.3 1225 665C1234.5 656.7 1246.2 649.2 1257 640C1267.8 630.8 1284.5 615 1290 610M1368 735C1365 740.8 1355.5 759.2 1350 770C1344.5 780.8 1340 790 1335 800C1330 810 1325.8 820 1320 830C1314.2 840 1305 850.8 1300 860C1295 869.2 1290.7 877.5 1290 885C1289.3 892.5 1297.7 899.2 1296 905C1294.3 910.8 1282.7 917.5 1280 920M1241 732C1240 736.7 1237.7 750.3 1235 760C1232.3 769.7 1227.2 781.3 1225 790C1222.8 798.7 1220.3 806.7 1222 812C1223.7 817.3 1228.3 819.7 1235 822C1241.7 824.3 1251.2 826 1262 826C1272.8 826 1288.7 824.3 1300 822C1311.3 819.7 1325 813.7 1330 812M1330 800C1325 803.3 1314.2 811.7 1300 820C1285.8 828.3 1262.5 844.8 1245 850C1227.5 855.2 1211.7 851.5 1195 851C1178.3 850.5 1161.7 848 1145 847C1128.3 846 1110.8 845.2 1095 845C1079.2 844.8 1065.5 844.8 1050 846C1034.5 847.2 1014.5 848.7 1002 852C989.5 855.3 981 861.3 975 866C969 870.7 967.5 877.7 966 880M1296 905C1291.7 907.8 1279.3 919.3 1270 922C1260.7 924.7 1251.7 923.8 1240 921C1228.3 918.2 1215 911 1200 905C1185 899 1166.7 889.2 1150 885C1133.3 880.8 1116.7 879.2 1100 880C1083.3 880.8 1065 884.2 1050 890C1035 895.8 1020 908 1010 915C1000 922 993.3 929.2 990 932M966 880C965.2 884.3 967.7 892.7 970 898C972.3 903.3 975.7 909.2 980 912C984.3 914.8 992.2 917 996 915C999.8 913 1002.2 905.2 1003 900C1003.8 894.8 1003.2 888.5 1001 884C998.8 879.5 994.3 875 990 873C985.7 871 979 870.8 975 872C971 873.2 966.8 875.7 966 880ZM1012 788C1009.2 795 1001.2 816.3 995 830C988.8 843.7 982.5 857.5 975 870C967.5 882.5 958.3 894.2 950 905C941.7 915.8 932.5 927.5 925 935C917.5 942.5 908.3 947.5 905 950M1040 731C1041.7 739.2 1044.2 763.5 1050 780C1055.8 796.5 1065 814.2 1075 830C1085 845.8 1097.5 861.7 1110 875C1122.5 888.3 1136.7 900 1150 910C1163.3 920 1177.5 928.3 1190 935C1202.5 941.7 1219.2 947.5 1225 950M1022 727C1028.3 734.2 1047 757.8 1060 770C1073 782.2 1085 790 1100 800C1115 810 1133.3 820.7 1150 830C1166.7 839.3 1181.7 849 1200 856C1218.3 863 1243.3 868.3 1260 872C1276.7 875.7 1293.3 877 1300 878M1225 795C1230 794.2 1244.2 791.5 1255 790C1265.8 788.5 1277.5 786 1290 786C1302.5 786 1323.3 789.3 1330 790M1225 795C1223.3 800.8 1217.2 817.5 1215 830C1212.8 842.5 1213.7 856.7 1212 870C1210.3 883.3 1207.8 896.7 1205 910C1202.2 923.3 1196.7 943.3 1195 950M1225 795C1228.3 798.3 1236.7 806.7 1245 815C1253.3 823.3 1265 835 1275 845C1285 855 1295.8 865.8 1305 875C1314.2 884.2 1325.8 895.8 1330 900M990 873C986.7 873.5 981.7 874 970 876C958.3 878 940.8 879.3 920 885C899.2 890.7 868.3 902.2 845 910C821.7 917.8 799.7 927 780 932C760.3 937 735.8 938.7 727 940M990 932C985 934.2 970 942 960 945C950 948 935 949.2 930 950M727 940C725 938.7 720.8 937 715 932C709.2 927 700.3 920 692 910C683.7 900 671.8 883.7 665 872C658.2 860.3 654.3 848 651 840C647.7 832 646.8 825.7 645 824C643.2 822.3 640.5 822.8 640 830C639.5 837.2 639.2 853.7 642 867C644.8 880.3 653.7 897.8 657 910C660.3 922.2 660.7 930.5 662 940C663.3 949.5 663.3 957.8 665 967C666.7 976.2 669.5 989.5 672 995C674.5 1000.5 672 1000.8 680 1000C688 999.2 712.2 992.5 720 990C727.8 987.5 731.2 988.3 727 985C722.8 981.7 700.8 975.8 695 970C689.2 964.2 690.8 955.7 692 950C693.2 944.3 696.5 938.3 702 936C707.5 933.7 721.2 936 725 936M740 950C742.5 948.8 749.2 944.3 755 943C760.8 941.7 768.3 941.3 775 942C781.7 942.7 790.3 945.5 795 947C799.7 948.5 801.7 950.3 803 951M890 951C892.5 949.7 900 943.7 905 943C910 942.3 916.7 945.7 920 947C923.3 948.3 924.2 950.3 925 951"/></defs>
<use href="#figp" fill="none" stroke="#e8625c" stroke-width="2" stroke-linecap="round" stroke-linejoin="round" opacity=".92"/>
<g clip-path="url(#clipPanel)"><use href="#figp" fill="none" stroke="#cc3a33" stroke-width="2.100" stroke-linecap="round" stroke-linejoin="round"/></g>
<g fill="none" stroke="#ec9a9a" stroke-width="2.200" stroke-linecap="round" stroke-linejoin="round" opacity=".55">
<path d="M1298 470C1301.3 468 1309.7 460.7 1318 458C1326.3 455.3 1337.7 454.2 1348 454C1358.3 453.8 1371 455.3 1380 457C1389 458.7 1395.7 460.2 1402 464C1408.3 467.8 1414.7 474.5 1418 480C1421.3 485.5 1421.7 490.3 1422 497C1422.3 503.7 1422.3 512 1420 520C1417.7 528 1412.3 539 1408 545C1403.7 551 1399 553.2 1394 556C1389 558.8 1386.2 561 1378 562C1369.8 563 1350.5 562 1345 562"/>
<path d="M1289 550C1288 543.2 1287.7 537.3 1295 533C1302.3 528.7 1319.2 523 1333 524C1346.8 525 1368 530.7 1378 539C1388 547.3 1392 562.2 1393 574C1394 585.8 1392.5 601 1384 610C1375.5 619 1355.3 628 1342 628C1328.7 628 1310.8 619 1304 610C1297.2 601 1303.5 584 1301 574C1298.5 564 1290 556.8 1289 550Z"/>
<path d="M1342 628C1350 625.5 1378.3 611 1390 613C1401.7 615 1407 632.7 1412 640C1417 647.3 1418.3 647.2 1420 657C1421.7 666.8 1424 685.2 1422 699C1420 712.8 1410.3 733.2 1408 740"/>
<path d="M1333 645C1325.7 652 1306.2 675 1289 687C1271.8 699 1244.8 709 1230 717C1215.2 725 1205 732 1200 735"/>
<path d="M1390 645C1391.5 649.5 1403 663 1399 672C1395 681 1380.3 688.5 1366 699C1351.7 709.5 1327.8 724.7 1313 735C1298.2 745.3 1289.2 754.3 1277 761C1264.8 767.7 1246.2 772.7 1240 775"/>
<path d="M1380 700C1383.3 702.5 1397 707.5 1400 715C1403 722.5 1401.3 735.8 1398 745C1394.7 754.2 1388 762.5 1380 770C1372 777.5 1361.7 785 1350 790C1338.3 795 1321.7 799.2 1310 800C1298.3 800.8 1285 795.8 1280 795"/>
<path d="M1040 708C1050 710.3 1080 717 1100 722C1120 727 1140.8 731.7 1160 738C1179.2 744.3 1201.7 753.8 1215 760C1228.3 766.2 1235.8 772.5 1240 775"/>
<path d="M1045 745C1054.2 747.5 1080.8 754.8 1100 760C1119.2 765.2 1140.8 771 1160 776C1179.2 781 1205.8 787.7 1215 790"/>
<path d="M1215 790C1204.2 801.7 1170.8 843.3 1150 860C1129.2 876.7 1108.3 882.5 1090 890C1071.7 897.5 1055 898.3 1040 905C1025 911.7 1013.3 922.5 1000 930C986.7 937.5 966.7 946.7 960 950"/>
<path d="M1330 812C1325 818.3 1311.7 838.7 1300 850C1288.3 861.3 1276.7 873.3 1260 880C1243.3 886.7 1223.3 889.7 1200 890C1176.7 890.3 1143.3 884 1120 882C1096.7 880 1075 878.3 1060 878C1045 877.7 1035 879.7 1030 880"/>
<path d="M1012 870C1014 866.7 1016.5 878 1022 880C1027.5 882 1039.5 878.7 1045 882C1050.5 885.3 1054.5 893.3 1055 900C1055.5 906.7 1052.2 916.2 1048 922C1043.8 927.8 1035.5 934.5 1030 935C1024.5 935.5 1018.3 930.8 1015 925C1011.7 919.2 1010.5 909.2 1010 900C1009.5 890.8 1010 873.3 1012 870Z"/>
<path d="M1030 880C1018.3 883.3 981.7 892.5 960 900C938.3 907.5 920 917.5 900 925C880 932.5 858.3 939.2 840 945C821.7 950.8 798.3 957.5 790 960"/>
<path d="M702 874C702.7 878.3 703 889 706 900C709 911 715.2 927.5 720 940C724.8 952.5 730.3 963.3 735 975C739.7 986.7 743.8 1000 748 1010C752.2 1020 751.3 1033 760 1035C768.7 1037 791.3 1026.2 800 1022C808.7 1017.8 813.7 1014 812 1010C810.3 1006 796.2 1002.2 790 998C783.8 993.8 776.7 990.5 775 985C773.3 979.5 779.2 968.3 780 965"/>
<path d="M702 874C703.7 875 708.2 874 712 880C715.8 886 718.7 899.2 725 910C731.3 920.8 740.8 935.8 750 945C759.2 954.2 775 961.7 780 965"/>
<path d="M1335 800C1337.5 808.3 1347.2 833.3 1350 850C1352.8 866.7 1353.7 885 1352 900C1350.3 915 1342 933.3 1340 940"/>
<path d="M1250 860C1253.3 866.7 1263.3 888.3 1270 900C1276.7 911.7 1283.3 922 1290 930C1296.7 938 1306.7 945 1310 948"/>
</g>
<g fill="none" stroke="#b9aea4" stroke-width="2.400" stroke-linecap="round" opacity=".55" filter="url(#blur1)">
<path d="M767 876C767.5 880.8 767.8 894.3 770 905C772.2 915.7 775.8 928.3 780 940C784.2 951.7 790.3 964.2 795 975C799.7 985.8 803.8 995.8 808 1005C812.2 1014.2 813 1027.8 820 1030C827 1032.2 847 1023 850 1018C853 1013 842.2 1005.5 838 1000C833.8 994.5 827.2 987.5 825 985"/>
<path d="M767 876C768.5 877.5 773 878.5 776 885C779 891.5 780.2 904.2 785 915C789.8 925.8 798.3 938.3 805 950C811.7 961.7 821.7 979.2 825 985"/>
<path d="M830 945C841.7 942.5 875 935.8 900 930C925 924.2 953.3 916.7 980 910C1006.7 903.3 1036.7 894.3 1060 890C1083.3 885.7 1110 885 1120 884"/>
</g>
<g fill="none" stroke="#8a7f7f" stroke-width="1.100">
<circle cx="1316.5" cy="497.5" r="7.300"/>
<circle cx="1318" cy="556" r="7.300"/>
<circle cx="1336" cy="611" r="7.300"/>
<circle cx="1296" cy="698" r="7.300"/>
<circle cx="1193" cy="748" r="7.300"/>
<circle cx="1284" cy="796" r="7.300"/>
<circle cx="1266" cy="889.5" r="7.300"/>
<circle cx="982.5" cy="891" r="7.300"/>
<circle cx="1022" cy="727" r="7.300"/>
<circle cx="1036" cy="709" r="7.300"/>
</g>
<g fill="#a9a09a" opacity=".6">
<circle cx="1352" cy="618.5" r="7"/>
<circle cx="1369.5" cy="671" r="7"/>
<circle cx="1331" cy="755" r="7"/>
<circle cx="1033" cy="891.5" r="7"/>
<circle cx="1212" cy="778" r="7"/>
<circle cx="1350.500" cy="561" r="5" fill="#e9a6a6"/>
</g>
<path d="M869 770.500H966" stroke="#e6dccf" stroke-width="3.500"/><path d="M869 768.500H966M869 773H966" stroke="#9a9088" stroke-width=".8"/><rect x="880.500" y="774" width="34.500" height="19" fill="#cdcdcd" stroke="#9a9a9a" stroke-width="1"/><rect x="923" y="774" width="35.500" height="19" fill="#cdcdcd" stroke="#9a9a9a" stroke-width="1"/><rect x="949.500" y="736" width="11.500" height="8.500" fill="#d2d2d4" stroke="#a8a8aa" stroke-width=".8"/>
<path d="M884 787q6-8 13-1t14-3M927 787q6-8 13-1t14-3M884 779h27M927 779h28" fill="none" stroke="#a6a6a6" stroke-width="2"/>
<rect x="870" y="749" width="96" height="17.500" fill="url(#gTube)"/>
<path d="M908 748.500H966" stroke="#333" stroke-width="1.500"/>
<path d="M846 748q0-6 8-6.500h12v31.500h-12q-8-.5-8-6.500z" fill="#1d1d1f"/><rect x="845" y="749" width="4" height="17" rx="1.500" fill="#8a8a8e"/><circle cx="853" cy="757.500" r="6" fill="#2c2c2e" stroke="#444" stroke-width="1"/>
<rect x="864" y="741" width="5.500" height="46.500" fill="#111"/>
<rect x="965.500" y="733" width="5" height="55.500" fill="#6e4426" stroke="#2a1a0c" stroke-width="1"/>
<path d="M971 739q10-3 17 4l9 4v22l-9 5q-7 6-17 4z" fill="#1c1c1e"/><path d="M976 748l14 9l-14 10" fill="none" stroke="#555" stroke-width="1.200"/>
<rect x="997" y="695" width="16" height="116.500" rx="3" fill="#161618"/><path d="M1002 699v108M1008 699v108" stroke="#4a4a4e" stroke-width="1.200"/><path d="M998 725h14M998 782h14" stroke="#3a3a3e" stroke-width="1"/>
<rect x="984" y="775" width="5" height="5" fill="#888"/>
<path d="M1360 733C1363.7 727.8 1366.3 729.8 1370 729C1373.7 728.2 1377.3 727.8 1382 728.5C1386.7 729.2 1393 730.9 1398 733C1403 735.1 1410 736.5 1412 741C1414 745.5 1412 750.7 1410 760C1408 769.3 1404.2 782.7 1400 797C1395.8 811.3 1390 829.5 1385 846C1380 862.5 1375.4 882 1370 896C1364.6 910 1361.1 924.8 1352.5 930C1343.9 935.2 1324.9 932.5 1318.5 927.5C1312.1 922.5 1314.9 907.9 1314 900C1313.1 892.1 1312 889.2 1313 880C1314 870.8 1316.3 859 1320 845C1323.7 831 1330.3 810.2 1335 796C1339.7 781.8 1343.8 770.5 1348 760C1352.2 749.5 1356.3 738.2 1360 733Z" fill="url(#gSeat)" stroke="#1e1208" stroke-width="1.600"/>
<path d="M1319 928L1353 930.5L1350 949.5L1311 949.5Z" fill="#7a3f12" stroke="#1e1208" stroke-width="1.400"/>
<path d="M1319 928L1353 930.500" stroke="#1e1208" stroke-width="1.300"/>
<path d="M1392 745C1390.7 752.5 1387.7 774.2 1384 790C1380.3 805.8 1374.8 823.3 1370 840C1365.2 856.7 1357.5 881.7 1355 890" fill="none" stroke="#b87a3e" stroke-width="9" opacity=".35" filter="url(#blur2)"/>
<ellipse cx="1147" cy="950" rx="35" ry="3.500" fill="#6a3c16"/>
<path d="M1377 860A69 88 0 0 1 1446 948" fill="none" stroke="#1a1a1a" stroke-width="1.200"/><path d="M1317 905Q1306 925 1312 948" fill="none" stroke="#8a8078" stroke-width="1"/>
<path d="M1367.500 934h60v-4h18v18h-78z" fill="#6c7080" stroke="#3c3f4c" stroke-width="1"/><rect x="1437" y="919" width="4" height="12" fill="#6c7080" stroke="#3c3f4c" stroke-width=".8"/><rect x="1420" y="928" width="8" height="6" fill="#7c8090" stroke="#3c3f4c" stroke-width=".8"/>
<path d="M1367.500 934h60" stroke="#a4a8b6" stroke-width="1.500"/>
<path d="M1395 790V950" stroke="#b89c80" stroke-width="1" opacity=".6"/>
<rect x="1428" y="774.500" width="39" height="13" rx="2" fill="#1a1a1c"/><path d="M1429 789l38 10v8l-38-10z" fill="#1f1f22"/>
<rect x="1436" y="799" width="12" height="17" fill="#5c6070" stroke="#2a2c36" stroke-width="1"/><rect x="1430" y="797" width="5" height="9" fill="#222"/><rect x="1455" y="806" width="7" height="8" fill="#44485a"/>
<path d="M1433 780h30" stroke="#4c4c52" stroke-width="1.500" stroke-dasharray="3 3"/>
<path d="M686 951C688.3 953 694.7 959 700 963C705.3 967 707.2 969.8 718 975C728.8 980.2 746.8 988.8 765 994C783.2 999.2 801.5 1002.7 827.5 1006C853.5 1009.3 879.3 1011.6 921 1014C962.7 1016.4 1024.3 1018.3 1077.5 1020.5C1130.7 1022.7 1159.6 1023.6 1240 1027C1320.4 1030.4 1483.4 1037.5 1560 1041C1636.6 1044.5 1676.2 1046.8 1699.5 1048L1698.500 949.500Z" fill="#03418a"/>
<path d="M686 951C688.3 953 694.7 959 700 963C705.3 967 707.2 969.8 718 975C728.8 980.2 746.8 988.8 765 994C783.2 999.2 801.5 1002.7 827.5 1006C853.5 1009.3 879.3 1011.6 921 1014C962.7 1016.4 1024.3 1018.3 1077.5 1020.5C1130.7 1022.7 1159.6 1023.6 1240 1027C1320.4 1030.4 1483.4 1037.5 1560 1041C1636.6 1044.5 1676.2 1046.8 1699.5 1048" fill="none" stroke="#3d8fe6" stroke-width="2"/>
<path d="M1699 949.500V1048" stroke="#3d8fe6" stroke-width="2.200"/>
<path d="M686 950.800H1698.500" stroke="#2f7fda" stroke-width="1.500"/>
<path d="M745 950H1310" stroke="#14161c" stroke-width="1.300" opacity=".8"/>
<g fill="none" stroke="#013772" stroke-width="2.500" opacity=".6" filter="url(#blur1)"><path d="M760 975C764.2 969.7 780.8 957.5 790 960C799.2 962.5 815 982.8 815 990C815 997.2 798.3 1002.7 790 1003C781.7 1003.3 770 996.7 765 992C760 987.3 755.8 980.3 760 975Z"/><path d="M820 1000C850 997.5 945 991.7 1000 985C1055 978.3 1125 964.2 1150 960"/></g>
<g stroke="#f08cc0" fill="#f08cc0"><path d="M1298.500 988V963" stroke-width="2.400"/><path d="M1298.500 957l4 8h-8z" stroke="none"/><path d="M1297 989H1275" stroke-width="2.400"/><path d="M1268 989l8-4v8z" stroke="none"/><circle cx="1298.500" cy="989" r="3.500" fill="#d0609c" stroke="none"/></g>
<text x="1294" y="956" font-family="Liberation Sans, sans-serif" font-size="10" fill="#f08cc0">tz</text><text x="1258" y="993" font-family="Liberation Sans, sans-serif" font-size="10" fill="#f08cc0">lx</text>
<rect x="1725" y="796" width="25" height="24" fill="url(#gShaft)"/>
<rect x="1728" y="880" width="19.500" height="206" fill="url(#gShaft)" stroke="#3a3d4a" stroke-width=".8"/>
<path d="M1703 905V852H1647Q1643 852 1643 857V866H1620V852Q1620 832 1650 826L1695 819.500L1779 816Q1782 850 1760 876Q1740 898 1703 905Z" fill="#6b6f82" stroke="#2e3040" stroke-width="1.200"/>
<path d="M1628 864V852Q1630 838 1652 834L1700 830" fill="none" stroke="#3a3d4c" stroke-width="1"/>
<path d="M1712 841H1765" stroke="#3a3d4c" stroke-width="1.200"/><circle cx="1704" cy="832" r="2.600" fill="#f4f4f4" stroke="#2e3040" stroke-width="1"/>
<rect x="1628" y="875" width="14" height="12" fill="#777b8e" stroke="#2e3040" stroke-width="1"/><rect x="1617" y="877" width="11" height="7" fill="#6b6f82" stroke="#2e3040" stroke-width=".8"/><rect x="1642" y="878.500" width="34" height="4.500" fill="#6b6f82" stroke="#2e3040" stroke-width=".8"/><rect x="1676" y="873" width="3.500" height="15" fill="#4a4e5e"/>
<path d="M1593 864Q1600 858 1606 866L1616 877V884L1606 896Q1599 903 1592 897Q1604 880 1593 864Z" fill="#6b6f82" stroke="#2e3040" stroke-width="1.100"/>
<rect x="1675" y="774" width="125" height="11" rx="3" fill="#17171a"/><rect x="1675" y="788" width="125" height="10" rx="3" fill="#17171a"/><rect x="1690" y="784" width="95" height="5" fill="#26262a"/>
<path d="M1676 779.500H1799M1676 793H1799" stroke="#3c3c42" stroke-width="1.200" stroke-dasharray="2 2"/>
<path d="M1695 775L1695 762.5L1722 732.5L1725 726L1750 725L1753 735L1772 740L1780 750L1780 775Z" fill="#1b1b1e"/>
<path d="M1697 773V763.500L1721 735V773Z" fill="#3b3b40"/>
<path d="M1722 733V774M1746 733V774" stroke="#3a3a40" stroke-width="1.200"/><path d="M1752 742q14-4 24 6v20q-12 4-24-6z" fill="#2c2c31" stroke="#4a4a52" stroke-width="1"/><path d="M1757 750q8-3 14 4M1758 760q6 2 13-2" stroke="#5a5a62" stroke-width="1.200" fill="none"/>
<path d="M1690 1157L1749 1157L1764 1207L1741 1211Z" fill="#5d6173" stroke="#2e3040" stroke-width="1"/>
<path d="M1708 1104L1726 1092L1726 1106Z" fill="#5d6173" stroke="#2e3040" stroke-width="1"/>
<path d="M1705 1105H1862V1156.500H1705C1680 1156.500 1657.500 1144 1657.500 1130.800C1657.500 1118 1680 1105 1705 1105Z" fill="url(#gBody)" stroke="#22242e" stroke-width="1.200"/>
<path d="M1705 1105V1156.500M1858.500 1105V1156.500" stroke="#22242e" stroke-width="1" stroke-dasharray="2 1.500"/>
<rect x="1725" y="1084" width="25" height="24" rx="2" fill="url(#gShaft)" stroke="#2e3040" stroke-width="1"/>
<path d="M1879.5 1061L1883.5 1061L1884 1200L1880 1200L1862 1157L1862 1105Z" fill="#656a7c" stroke="#22242e" stroke-width="1.200"/>
<path d="M1879.500 1062V1199" stroke="#3a3d4a" stroke-width="1"/>
</svg>
<!-- ============ MASS PROPERTIES DIALOG ============ -->
<style>
#dlg{left:83px;top:205px;width:468px;height:657.500px;background:linear-gradient(to bottom,#fbe6e2 0,#f8ddd9 30px,#f6d9d5 100%);border:1px solid #7d7878;border-radius:7px;box-shadow:0 0 0 1px rgba(255,255,255,.55) inset,1px 2px 6px rgba(0,0,0,.32),0 0 2px rgba(0,0,0,.3)}
#dlgc{left:89.500px;top:231.500px;width:454.500px;height:622.500px;background:#f0f0f0;border:1px solid #a19a9a;box-shadow:0 0 0 1px rgba(255,255,255,.5)}
.dt{position:absolute;font-size:9.900px;line-height:12px;color:#111;white-space:nowrap;letter-spacing:-.05px}
.btn{position:absolute;height:19px;border:1px solid #707070;border-radius:3px;background:linear-gradient(to bottom,#f4f4f4 0,#ededed 48%,#dedede 52%,#d2d2d2 100%);box-shadow:0 0 0 1px #fbfbfb inset;font-size:9.700px;line-height:18.500px;text-align:center;color:#111;white-space:nowrap}
.btn.dis{color:#9b9b9b;border-color:#b5b5b5;background:#f2f2f2}
.cb{position:absolute;left:130.500px;width:11px;height:11px;border:1px solid #8e8f8f;background:linear-gradient(135deg,#dcdcdc,#fbfbfb);box-shadow:0 0 0 1px #f4f4f4 inset}
</style>
<div id="dlg" class="abs"></div>
<div id="dlgc" class="abs"></div>
<svg class="abs" style="left:89px;top:210px" width="17" height="16" viewBox="0 0 17 16"><path d="M1 3.500h14M8 1v12M3 13.500h10" stroke="#2750b8" stroke-width="1.600" fill="none"/><circle cx="3.500" cy="8.500" r="2.600" fill="#f0bf2e" stroke="#7a5a10" stroke-width=".8"/><circle cx="12.500" cy="8.500" r="2.600" fill="#f0bf2e" stroke="#7a5a10" stroke-width=".8"/></svg>
<div class="abs" style="left:109px;top:211px;font-size:10.700px;line-height:14px;color:#111;white-space:nowrap">Mass Properties</div>
<div class="abs" style="left:451px;top:205px;width:92px;height:17.500px;border:1px solid #b7a7a5;border-top:none;border-radius:0 0 4px 4px;background:linear-gradient(to bottom,#fdeeeb,#f5d8d4);box-shadow:0 0 0 1px rgba(255,255,255,.6) inset"></div>
<div class="abs" style="left:476px;top:206px;width:1px;height:16px;background:#c3b1af"></div><div class="abs" style="left:501px;top:206px;width:1px;height:16px;background:#c3b1af"></div>
<svg class="abs" style="left:451px;top:205px" width="92" height="18" viewBox="0 0 92 18"><rect x="8.500" y="9.500" width="10" height="3.500" fill="#fff" stroke="#444" stroke-width="1.100"/><rect x="33.500" y="5.500" width="9" height="7.500" fill="none" stroke="#b9b3b3" stroke-width="1.100"/><rect x="36" y="8" width="4" height="2.500" fill="none" stroke="#b9b3b3" stroke-width=".9"/><path d="M67 5l9 8M76 5l-9 8" stroke="#444" stroke-width="3.200"/><path d="M67 5l9 8M76 5l-9 8" stroke="#fff" stroke-width="1.100"/></svg>
<div class="abs" style="left:130.500px;top:237px;width:275px;height:55.500px;background:#cfe3f6;border:1.500px solid #3c9be6"></div>
<div class="dt" style="left:133.800px;top:238.500px;font-size:9.200px">WATER_DISPLACED</div>
<svg class="abs" style="left:101px;top:241px" width="20" height="20" viewBox="0 0 20 20"><path d="M3 6l5-3l9 7v6l-5 2l-9-7z" fill="#f0cf3a" stroke="#9a7a12" stroke-width="1"/><path d="M3 6l9 7l5-3M12 13v5" fill="none" stroke="#9a7a12" stroke-width="1"/><circle cx="7" cy="7" r="2.500" fill="none" stroke="#555" stroke-width="1"/></svg>
<div class="btn" style="left:436px;top:254.500px;width:67px">Options...</div>
<div class="btn dis" style="left:131px;top:298px;width:175px">Override Mass Properties...</div>
<div class="btn" style="left:323.500px;top:298px;width:82px">Recalculate</div>
<div class="cb" style="top:326px"></div><div class="dt" style="left:144.700px;top:325.6px">Include hidden bodies/components</div>
<div class="cb" style="top:346px"></div><div class="dt" style="left:144.700px;top:345.6px">Create Center of Mass feature</div>
<div class="cb" style="top:366px"></div><div class="dt" style="left:144.700px;top:365.6px">Show weld bead mass</div>
<div class="dt" style="left:129.700px;top:385.500px">Report coordinate values relative to:</div>
<div class="abs" style="left:304px;top:382.500px;width:197.500px;height:18px;background:#fff;border:1px solid #e3e3e3"></div>
<div class="dt" style="left:309px;top:385.500px">-- default --</div>
<div class="dd" style="left:489.500px;top:390px;border-left-width:3.500px;border-right-width:3.500px;border-top-width:4px"></div>
<div class="abs" style="left:130px;top:406px;width:372px;height:407px;background:#f1f1f1;border-left:1.500px solid #5c5c5c;border-top:1.500px solid #6e6e6e;border-right:1px solid #e6e6e6"></div>
<div class="abs" style="left:164px;top:467.500px;width:73.500px;height:14.500px;background:#eef01e"></div>
<div class="dt" style="left:131.6px;top:409.3px">Mass properties of selected Solid Bodies:</div>
<div class="dt" style="left:145.6px;top:421.05px">Coordinate system: -- default --</div>
<div class="dt" style="left:131.6px;top:444.55px">Density = 0.04 pounds per cubic inch</div>
<div class="dt" style="left:131.6px;top:468.05px">Mass = </div>
<div class="dt" style="left:166.5px;top:468.05px">256.89 pounds</div>
<div class="dt" style="left:131.6px;top:491.55px">Volume = 7110.71 cubic inches</div>
<div class="dt" style="left:131.6px;top:515.05px">Surface area = 3681.86 square inches</div>
<div class="dt" style="left:131.6px;top:538.55px">Center of mass: ( inches )</div>
<div class="dt" style="left:150.2px;top:550.3px">X = 31.60</div>
<div class="dt" style="left:150.2px;top:562.05px">Y = 29.55</div>
<div class="dt" style="left:150.2px;top:573.8px">Z = 0.00</div>
<div class="dt" style="left:131.6px;top:597.3px">Principal axes of inertia and principal moments of inertia: ( pounds * square inches )</div>
<div class="dt" style="left:131.6px;top:609.05px">Taken at the center of mass.</div>
<div class="dt" style="left:153px;top:620.8px">Ix = (1.00, 0.02, 0.00)</div>
<div class="dt" style="left:276.5px;top:620.8px">Px = 12707.78</div>
<div class="dt" style="left:153px;top:632.55px">Iy = (0.00, -0.00, -1.00)</div>
<div class="dt" style="left:276.5px;top:632.55px">Py = 72563.18</div>
<div class="dt" style="left:153px;top:644.3px">Iz = (-0.02, 1.00, -0.00)</div>
<div class="dt" style="left:276.5px;top:644.3px">Pz = 84084.92</div>
<div class="dt" style="left:131.6px;top:667.8px">Moments of inertia: ( pounds * square inches )</div>
<div class="dt" style="left:131.6px;top:679.55px">Taken at the center of mass and aligned with the output coordinate system.</div>
<div class="dt" style="left:149.7px;top:691.3px">Lxx = 12742.61</div>
<div class="dt" style="left:276.5px;top:691.3px">Lxy = 1576.33</div>
<div class="dt" style="left:403.7px;top:691.3px">Lxz = 0.04</div>
<div class="dt" style="left:149.7px;top:703.05px">Lyx = 1576.33</div>
<div class="dt" style="left:276.5px;top:703.05px">Lyy = 84050.09</div>
<div class="dt" style="left:403.7px;top:703.05px">Lyz = 0.16</div>
<div class="dt" style="left:149.7px;top:714.8px">Lzx = 0.04</div>
<div class="dt" style="left:276.5px;top:714.8px">Lzy = 0.16</div>
<div class="dt" style="left:403.7px;top:714.8px">Lzz = 72563.18</div>
<div class="dt" style="left:131.6px;top:738.3px">Moments of inertia: ( pounds * square inches )</div>
<div class="dt" style="left:131.6px;top:750.05px">Taken at the output coordinate system.</div>
<div class="dt" style="left:149.7px;top:761.8px">Ixx = 237087.86</div>
<div class="dt" style="left:276.5px;top:761.8px">Ixy = 241435.34</div>
<div class="dt" style="left:403.7px;top:761.8px">Ixz = 0.23</div>
<div class="dt" style="left:149.7px;top:773.55px">Iyx = 241435.34</div>
<div class="dt" style="left:276.5px;top:773.55px">Iyy = 340495.65</div>
<div class="dt" style="left:403.7px;top:773.55px">Iyz = 0.34</div>
<div class="dt" style="left:149.7px;top:785.3px">Izx = 0.23</div>
<div class="dt" style="left:276.5px;top:785.3px">Izy = 0.34</div>
<div class="dt" style="left:403.7px;top:785.3px">Izz = 553354.00</div>
<div class="btn" style="left:130.500px;top:822px;width:80px">Help</div>
<div class="btn" style="left:265px;top:822px;width:83px">Print...</div>
<div class="btn" style="left:392px;top:822px;width:110px">Copy to Clipboard</div>
<!-- ============ LEFT PANEL ============ -->
<div class="abs" style="left:11px;top:182px;width:38px;height:1086px;background:linear-gradient(to bottom,#d9dcec 0,#dfe2f0 300px,#d3d7ea 600px,#bcc1da 900px,#b3b8d4 1086px)"></div>
<div class="abs" style="left:11px;top:182px;width:38px;height:272px;background:linear-gradient(to right,#eaecf5 0,#d9dcea 45%,#b9bdd4 94%,#d6d9e8 100%);border-bottom:1px solid #a4a8c0"></div>
<div class="abs" style="left:11px;top:1242px;width:38px;height:1.5px;background:#eef0f6"></div>
<div class="abs" style="left:17px;top:184px;font-size:10px;letter-spacing:1.200px;color:#70748a;line-height:14px;font-weight:bold;font-style:italic">······</div>
<svg class="abs" style="left:14px;top:200px" width="34" height="260" viewBox="14 200 34 260">
  <g fill="#dfe1ea" stroke="#8e919f" stroke-width="1.400">
    <rect x="20" y="211" width="17" height="17"/><rect x="20" y="243" width="17" height="17"/>
    <rect x="20" y="307" width="17" height="17"/><rect x="20" y="339" width="17" height="17"/>
    <path d="M23 378v-9h12v9"/><rect x="20" y="377" width="18" height="11"/><rect x="25" y="381" width="8" height="5" fill="#a9acb8" stroke="none"/>
    <rect x="22" y="402" width="15" height="15"/>
    <circle cx="24.500" cy="444" r="4"/><path d="M27 440l9-8l3.500 3.500l-9.500 8z"/>
  </g>
  <g font-family="Liberation Serif, serif" font-size="14" font-weight="bold" fill="#8b8e9c"><text x="23.500" y="226">A</text><text x="23.500" y="258">A</text><text x="22" y="322">A</text><text x="21" y="354">A</text><text x="25.500" y="414.500" font-size="11">A</text></g>
  <g fill="none" stroke="#8e919f" stroke-width="1.300"><path d="M34 212l4-4M36 206v4h4M30 243l5-4l4 3l-4 5"/><path d="M37 303v8M33 307h8" stroke-width="2"/><path d="M22 399l-3-3M29.500 399v-4M37 399l3-3M39.500 409.500h4M37 420l3 3M29.500 420v4M22 420l-3 3M19.500 409.500h-4"/><path d="M36 446l3 3M21 436l2-2"/></g>
  <g fill="#c4c7d2" stroke="#8e919f" stroke-width="1.200"><rect x="33" y="339" width="8" height="16" rx="3.500"/><ellipse cx="37" cy="342" rx="4" ry="2.300"/></g>
  <!-- active: folder w/ image -->
  <rect x="29" y="270.500" width="13.500" height="10.500" fill="#1c1c1c"/><rect x="31" y="272.500" width="9.500" height="6.500" fill="#ececec"/><path d="M32.500 277.500l2-3l1.500 3z" fill="#333"/><path d="M37.500 274h2M38.500 273v2" stroke="#333" stroke-width=".8"/>
  <path d="M20 291v-10h7l2 2h8v8z" fill="#f0b62c" stroke="#a67812" stroke-width="1"/><path d="M20 291l3-7h16l-3 7z" fill="#fbe07a" stroke="#a67812" stroke-width="1"/>
  <path d="M21 278q0-6 6-6" stroke="#1c39c8" stroke-width="2" fill="none"/><path d="M25 268.500l4.500 3.500l-4.500 3.500z" fill="#1c39c8"/>
</svg>
<!-- panel collapse handle -->
<div class="abs" style="left:49px;top:682px;width:12px;height:39px;background:#e3e5f0;border:1.500px solid #7d8098;border-left:none;border-radius:0 4px 4px 0"></div>
<svg class="abs" style="left:49px;top:682px" width="12" height="39"><path d="M3.500 6l4 3l-4 3zM3.500 16l4 3l-4 3zM3.500 26l4 3l-4 3z" fill="#3a4acb"/></svg>

<!-- ============ VIEW TOOLBAR ============ -->
<svg class="abs" style="left:785px;top:158px" width="390" height="32" viewBox="785 158 390 32">
  <defs><radialGradient id="gloss" cx=".35" cy=".3" r=".7"><stop offset="0" stop-color="#fff" stop-opacity=".75"/><stop offset=".6" stop-color="#fff" stop-opacity="0"/></radialGradient>
  <linearGradient id="cubeR" x1="0" y1="0" x2="1" y2="0"><stop offset="0" stop-color="#dfeafa"/><stop offset="1" stop-color="#4f86d8"/></linearGradient></defs>
  <!-- zoom to fit -->
  <path d="M803 177l7 7.500" stroke="#3f7fd8" stroke-width="3.400" stroke-linecap="round"/><circle cx="798" cy="170.500" r="7.300" fill="#d9dde4" stroke="#7b808c" stroke-width="1.500"/><circle cx="798" cy="170.500" r="3.200" fill="#eef0f4" stroke="#6d727e" stroke-width="1"/><path d="M794 166.500l1.500 1.500M802 166.500l-1.500 1.500M794 174.500l1.500-1.500M802 174.500l-1.500-1.500" stroke="#555" stroke-width="1"/>
  <!-- zoom to area -->
  <path d="M835 177l7 7.500" stroke="#3f7fd8" stroke-width="3.400" stroke-linecap="round"/><circle cx="830" cy="171" r="7" fill="#d9dde4" stroke="#7b808c" stroke-width="1.500"/><rect x="822.500" y="163" width="14" height="14" fill="none" stroke="#555" stroke-width="1" stroke-dasharray="2 1.600"/>
  <!-- previous view -->
  <path d="M855 165l5-2.500l14 15l-6 6z" fill="#bfe0fb" stroke="#2f7fd0" stroke-width="1.400"/><ellipse cx="870.500" cy="180.500" rx="4.600" ry="2.600" fill="#eaf6ff" stroke="#2f7fd0" stroke-width="1.200" transform="rotate(-42 870.500 180.500)"/><path d="M875 166h-7" stroke="#2f6fe0" stroke-width="2"/><path d="M866 166l4-3.200v6.400z" fill="#2f6fe0"/>
  <!-- section view -->
  <path d="M887 166q9-5 18 0v15q-9 5-18 0z" fill="#4f8fe0" stroke="#2a5aa8" stroke-width="1"/><path d="M887 166l5 2.500v15l-5-2.500zM905 166l-5 2.500v15l5-2.500z" fill="#f0cb35" stroke="#8a6a10" stroke-width=".9"/><path d="M889.500 169v12M902.500 169v12" stroke="#8a6a10" stroke-width=".9" stroke-dasharray="1.500 1.500"/><ellipse cx="896" cy="166" rx="9" ry="2.600" fill="#8cb8f0" stroke="#2a5aa8" stroke-width=".9"/>
  <!-- view orientation -->
  <path d="M917 169h13v14h-13z" fill="#8ab4ec" stroke="#3a62a8" stroke-width="1.200"/><path d="M917 169l6-6h14l-7 6z" fill="#eef4fd" stroke="#3a62a8" stroke-width="1.100"/><path d="M930 183l7-6v-14l-7 6z" fill="#fdfdff" stroke="#3a62a8" stroke-width="1.100"/><path d="M928 163v6M933.500 173h-3.500" stroke="#e02c20" stroke-width="1.300"/><path d="M926 168l2 2.500l2-2.500zM932 171l-2.500 2l2.500 2z" fill="#e02c20"/>
  <!-- display style -->
  <path d="M963 169h14v15h-14z" fill="#fcfdff" stroke="#4a68a0" stroke-width="1.200"/><path d="M963 169l6-6h15l-7 6z" fill="#dbe8fa" stroke="#4a68a0" stroke-width="1.100"/><path d="M977 184l7-6v-15l-7 6z" fill="url(#cubeR)" stroke="#4a68a0" stroke-width="1.100"/><path d="M970 169v15h7v-15z" fill="#a9c8f2" opacity=".7"/>
  <!-- hide/show glasses -->
  <g fill="#e8eef6" stroke="#7c8598" stroke-width="1.500"><circle cx="1012.500" cy="176.500" r="4.600"/><circle cx="1025.500" cy="179" r="4.200"/></g><path d="M1009 172.500q1-6 6-5M1017 176q2.500-1.500 4.500 1M1029 176l4-2" fill="none" stroke="#7c8598" stroke-width="1.400"/>
  <!-- appearance -->
  <circle cx="1064" cy="173" r="11" fill="#e6e6e6"/><path d="M1064 173v-11a11 11 0 0 1 11 11z" fill="#e0342a"/><path d="M1064 173h11a11 11 0 0 1-11 11z" fill="#f0c22c"/><path d="M1064 173v11a11 11 0 0 1-11-11z" fill="#3fb03a"/><path d="M1064 173h-11a11 11 0 0 1 11-11z" fill="#3a7ae0"/><circle cx="1064" cy="173" r="11" fill="url(#gloss)"/>
  <!-- scene -->
  <circle cx="1096" cy="170.500" r="8" fill="#e6e6e6"/><path d="M1096 170.500v-8a8 8 0 0 1 8 8z" fill="#e0342a"/><path d="M1096 170.500h8a8 8 0 0 1-8 8z" fill="#f0c22c"/><path d="M1096 170.500v8a8 8 0 0 1-8-8z" fill="#3fb03a"/><path d="M1096 170.500h-8a8 8 0 0 1 8-8z" fill="#3a7ae0"/><circle cx="1096" cy="170.500" r="8" fill="url(#gloss)"/><path d="M1085 184h22M1087 180l5 4.500M1105 180l-5 4.500M1090 179l6 5l6-5" stroke="#2a2a2a" stroke-width="1.700" fill="none"/>
  <!-- view settings -->
  <rect x="1131" y="166" width="20" height="14.500" fill="#d8d8dc" stroke="#5e5e66" stroke-width="1.400"/><rect x="1134" y="169" width="14" height="8.500" fill="#9fb4c6"/><path d="M1135 183.500h12" stroke="#555" stroke-width="2"/><path d="M1139 167q3-7 11-5l3 3l-5 4.500q-3-3-9-2.500z" fill="#e2b77e" stroke="#8a5a22" stroke-width=".9"/>
</svg>
<div class="dd" style="left:943px;top:172px;border-top-color:#555"></div><div class="dd" style="left:989px;top:172px;border-top-color:#555"></div><div class="dd" style="left:1035px;top:172px;border-top-color:#555"></div><div class="dd" style="left:1112px;top:172px;border-top-color:#555"></div><div class="dd" style="left:1158px;top:172px;border-top-color:#555"></div>
<!-- doc window buttons -->
<svg class="abs" style="left:1745px;top:160px" width="160" height="28" viewBox="1745 160 160 28" fill="#f6f6f8" stroke="#8d8f9a" stroke-width="1.600">
  <rect x="1750" y="165" width="15" height="15" rx="1"/><path d="M1755 169l-2 3.500l2 3.500M1758.500 169v7h2v-7z" fill="none" stroke-width="1.300"/>
  <rect x="1782" y="165" width="15" height="15" rx="1"/><path d="M1792 169l2 3.500l-2 3.500M1786.500 169v7h2v-7z" fill="none" stroke-width="1.300"/>
  <rect x="1813" y="176" width="15" height="5" rx="1"/>
  <rect x="1849" y="165" width="13" height="9" rx="1"/><rect x="1844" y="170" width="13" height="10" rx="1"/><rect x="1848" y="173.500" width="5" height="3.500" stroke-width="1.100"/>
  <path d="M1878 166l14 14M1892 166l-14 14" stroke-width="4.200" stroke="#8d8f9a"/><path d="M1878 166l14 14M1892 166l-14 14" stroke-width="1.400" stroke="#f6f6f8"/>
</svg>

<!-- ============ TASK PANE TABS (right) ============ -->
<svg class="abs" style="left:1872px;top:232px" width="40" height="240" viewBox="1872 232 40 240">
  <g fill="#c9cce0" stroke="#8387a0" stroke-width="1.600">
    <path d="M1910 236h-28q-4 0-4 4v22q0 4 4 4h28z"/><path d="M1910 270h-28q-4 0-4 4v22q0 4 4 4h28z"/><path d="M1910 303h-28q-4 0-4 4v22q0 4 4 4h28z"/><path d="M1910 336h-28q-4 0-4 4v22q0 4 4 4h28z"/><path d="M1910 369h-28q-4 0-4 4v22q0 4 4 4h28z"/>
    <path d="M1910 402h-28q-4 0-4 4v22q0 4 4 4h28z" fill="#eceef6"/><path d="M1910 435h-28q-4 0-4 4v22q0 4 4 4h28z"/>
  </g>
  <!-- chat -->
  <path d="M1884 242h17v11h-10l-4 4v-4h-3z" fill="#4a9ae8" stroke="#2a6ab8" stroke-width="1"/><path d="M1891 249h15v10h-3v4l-4-4h-8z" fill="#8acb2c" stroke="#5a9a14" stroke-width="1"/>
  <!-- home -->
  <path d="M1883 288l12-11l12 11" fill="none" stroke="#a67812" stroke-width="2.500"/><path d="M1887 287v9h16v-9l-8-7z" fill="#fbe88a" stroke="#a67812" stroke-width="1.200"/><rect x="1893" y="289" width="4" height="7" fill="#e8a82c" stroke="#a67812" stroke-width=".8"/><rect x="1901" y="277" width="2.500" height="6" fill="#e04a2a"/>
  <!-- books -->
  <path d="M1884 318l5-4v14l-5 0z" fill="#2fa83a" stroke="#1a6a1e" stroke-width=".8"/><path d="M1889 314l5-4v18h-5z" fill="#3fc24a" stroke="#1a6a1e" stroke-width=".8"/><path d="M1894 312l5-4v20h-5z" fill="#f0c83a" stroke="#8a6a10" stroke-width=".8"/><path d="M1899 310l5-3v21h-5z" fill="#3a6ad8" stroke="#1a3a8a" stroke-width=".8"/><path d="M1904 312l3 2v14h-3z" fill="#7a9ae8" stroke="#1a3a8a" stroke-width=".8"/>
  <!-- folder -->
  <path d="M1884 360v-15h8l2 2h8v3" fill="#f0b62c" stroke="#a67812" stroke-width="1.200"/><path d="M1884 360l5-10h18l-5 10z" fill="#fbe07a" stroke="#a67812" stroke-width="1.200"/>
  <!-- view palette -->
  <rect x="1884" y="374" width="22" height="14" fill="#e6ecf8" stroke="#4a62a0" stroke-width="1.200"/><path d="M1887 378h7M1898 378h5" stroke="#e8c02c" stroke-width="2.400"/><path d="M1887 386q4-5 8 0z" fill="#e8b42c"/><rect x="1898" y="382" width="6" height="4" fill="#3a5ab8"/><path d="M1884 393h8" stroke="#1c39c8" stroke-width="2.200"/><path d="M1890 389.500l5 3.500l-5 3.500z" fill="#1c39c8"/>
  <!-- appearance ball -->
  <circle cx="1895" cy="418" r="10" fill="#ddd"/><path d="M1895 418v-10a10 10 0 0 1 10 10z" fill="#e0342a"/><path d="M1895 418h10a10 10 0 0 1-10 10z" fill="#f0c22c"/><path d="M1895 418v10a10 10 0 0 1-10-10z" fill="#3fb03a"/><path d="M1895 418h-10a10 10 0 0 1 10-10z" fill="#2f62d8"/>
  <!-- custom props -->
  <path d="M1885 447h19v15h-19z" fill="#f4f1e6" stroke="#777" stroke-width="1.200"/><path d="M1888 452h13M1888 456h13" stroke="#aaa" stroke-width="1"/><path d="M1889 447q4-7 13-5l4 3l-6 4q-4-3-11-2z" fill="#e2b77e" stroke="#8a5a22" stroke-width="1"/>
</svg>

<!-- ============ TRIAD + VIEW LABEL ============ -->
<svg class="abs" style="left:60px;top:1150px" width="90" height="80" viewBox="60 1150 90 80">
  <path d="M119 1215v-31" stroke="#1f7a2a" stroke-width="5"/><path d="M119 1215v-31" stroke="#4aa852" stroke-width="1.500"/><path d="M119 1171l6.500 15h-13z" fill="#166a22"/>
  <path d="M118 1214h-28" stroke="#d01c1c" stroke-width="5"/><path d="M118 1214h-28" stroke="#ee5a5a" stroke-width="1.500"/><path d="M77 1214l14-6.500v13z" fill="#b81414"/>
  <path d="M114 1208h4M114 1219h6" stroke="#2a3af0" stroke-width="1.800"/>
  <text x="113" y="1168" font-family="Liberation Sans, sans-serif" font-size="14" fill="#2a8a36">Y</text>
  <text x="68" y="1220" font-family="Liberation Sans, sans-serif" font-size="15" fill="#ee2a2a">X</text>
</svg>
<div class="abs" style="left:68px;top:1249.600px;font-size:17.500px;font-weight:bold;color:#1b1a58;letter-spacing:1.300px;line-height:20px;white-space:nowrap">*Back</div>

<!-- ============ CAD LABEL ============ -->
<svg class="abs" style="left:1740px;top:1190px" width="170" height="76" viewBox="1740 1190 170 76">
  <text x="1754.300" y="1250.300" font-family="Liberation Sans, sans-serif" font-weight="bold" font-size="64.500" fill="#fff" stroke="#000" stroke-width="9" stroke-linejoin="round" paint-order="stroke fill" textLength="139.500" lengthAdjust="spacingAndGlyphs">CAD</text>
</svg>
</div>
<div id="frameB2" class="abs fr"></div><div id="frame" class="abs fr"></div><div id="frameLtint" class="abs fr"></div>
</div>
</body>
</html>
